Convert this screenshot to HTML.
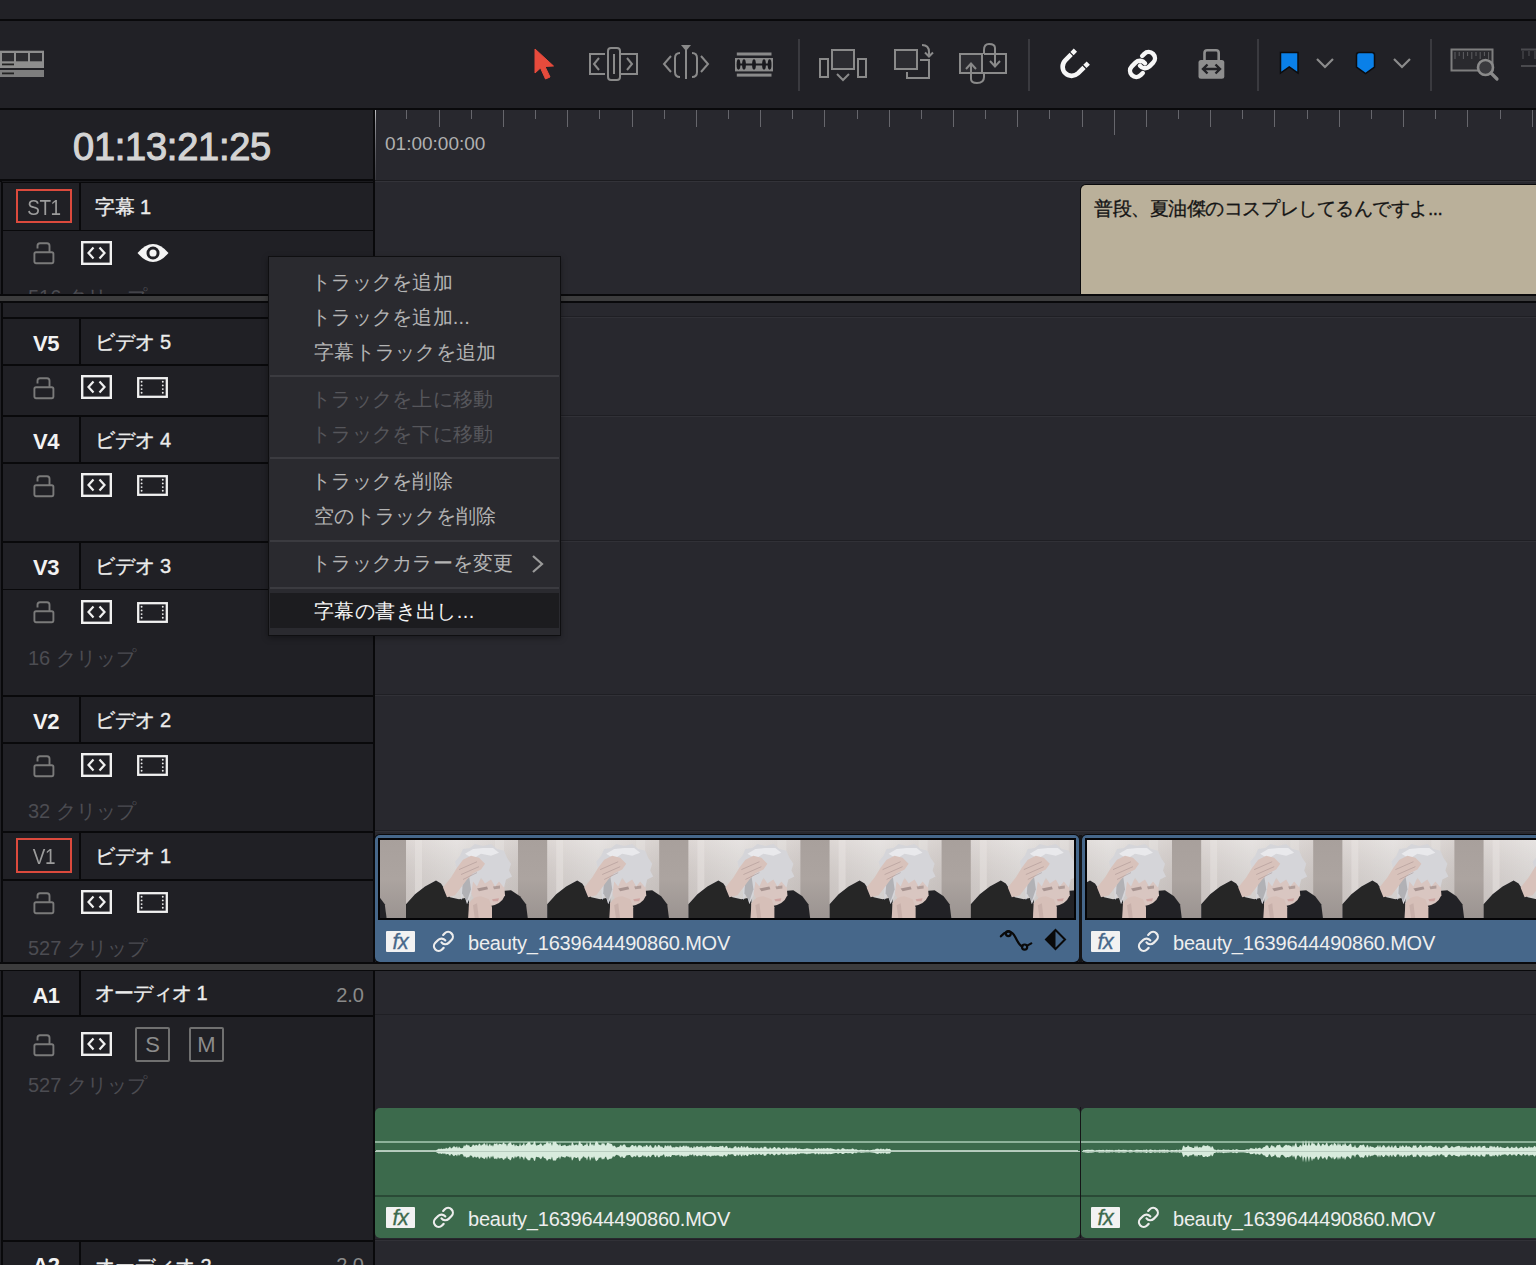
<!DOCTYPE html><html><head><meta charset="utf-8"><style>
*{margin:0;padding:0;box-sizing:border-box}
html,body{width:1536px;height:1265px;overflow:hidden;background:#202025;font-family:"Liberation Sans", sans-serif;}
.a{position:absolute}
.t{position:absolute;white-space:nowrap;line-height:1}
svg{position:absolute;overflow:visible}
</style></head><body>

<div class="a" style="left:0px;top:0px;width:1536px;height:19px;background:#212126;"></div>
<div class="a" style="left:0px;top:19px;width:1536px;height:2px;background:#09090b;"></div>
<div class="a" style="left:0px;top:21px;width:1536px;height:87px;background:#212126;"></div>
<div class="a" style="left:0px;top:108px;width:1536px;height:2px;background:#09090b;"></div>
<div class="a" style="left:0px;top:110px;width:373px;height:1155px;background:#202025;"></div>
<div class="a" style="left:373px;top:110px;width:2px;height:1155px;background:#09090b;"></div>
<div class="a" style="left:375px;top:110px;width:1161px;height:1155px;background:#28282e;"></div>
<div class="t" style="left:73px;top:128px;font-size:38px;color:#d4d4d4;letter-spacing:-0.25px;-webkit-text-stroke:1.1px #d4d4d4">01:13:21:25</div>
<div class="a" style="left:375px;top:180px;width:1161px;height:1px;background:#1c1c20;"></div>
<div class="a" style="left:375px;top:181px;width:1161px;height:1px;background:#333339;"></div>
<div class="a" style="left:406px;top:110px;width:1px;height:9px;background:#66666c;"></div>
<div class="a" style="left:439px;top:110px;width:1px;height:17px;background:#66666c;"></div>
<div class="a" style="left:471px;top:110px;width:1px;height:9px;background:#66666c;"></div>
<div class="a" style="left:503px;top:110px;width:1px;height:17px;background:#66666c;"></div>
<div class="a" style="left:535px;top:110px;width:1px;height:9px;background:#66666c;"></div>
<div class="a" style="left:567px;top:110px;width:1px;height:17px;background:#66666c;"></div>
<div class="a" style="left:599px;top:110px;width:1px;height:9px;background:#66666c;"></div>
<div class="a" style="left:632px;top:110px;width:1px;height:17px;background:#66666c;"></div>
<div class="a" style="left:664px;top:110px;width:1px;height:9px;background:#66666c;"></div>
<div class="a" style="left:696px;top:110px;width:1px;height:17px;background:#66666c;"></div>
<div class="a" style="left:728px;top:110px;width:1px;height:9px;background:#66666c;"></div>
<div class="a" style="left:760px;top:110px;width:1px;height:17px;background:#66666c;"></div>
<div class="a" style="left:792px;top:110px;width:1px;height:9px;background:#66666c;"></div>
<div class="a" style="left:824px;top:110px;width:1px;height:17px;background:#66666c;"></div>
<div class="a" style="left:857px;top:110px;width:1px;height:9px;background:#66666c;"></div>
<div class="a" style="left:889px;top:110px;width:1px;height:17px;background:#66666c;"></div>
<div class="a" style="left:921px;top:110px;width:1px;height:9px;background:#66666c;"></div>
<div class="a" style="left:953px;top:110px;width:1px;height:17px;background:#66666c;"></div>
<div class="a" style="left:985px;top:110px;width:1px;height:9px;background:#66666c;"></div>
<div class="a" style="left:1017px;top:110px;width:1px;height:17px;background:#66666c;"></div>
<div class="a" style="left:1049px;top:110px;width:1px;height:9px;background:#66666c;"></div>
<div class="a" style="left:1082px;top:110px;width:1px;height:17px;background:#66666c;"></div>
<div class="a" style="left:1114px;top:110px;width:1px;height:25px;background:#66666c;"></div>
<div class="a" style="left:1146px;top:110px;width:1px;height:17px;background:#66666c;"></div>
<div class="a" style="left:1178px;top:110px;width:1px;height:9px;background:#66666c;"></div>
<div class="a" style="left:1210px;top:110px;width:1px;height:17px;background:#66666c;"></div>
<div class="a" style="left:1242px;top:110px;width:1px;height:9px;background:#66666c;"></div>
<div class="a" style="left:1274px;top:110px;width:1px;height:17px;background:#66666c;"></div>
<div class="a" style="left:1307px;top:110px;width:1px;height:9px;background:#66666c;"></div>
<div class="a" style="left:1339px;top:110px;width:1px;height:17px;background:#66666c;"></div>
<div class="a" style="left:1371px;top:110px;width:1px;height:9px;background:#66666c;"></div>
<div class="a" style="left:1403px;top:110px;width:1px;height:17px;background:#66666c;"></div>
<div class="a" style="left:1435px;top:110px;width:1px;height:9px;background:#66666c;"></div>
<div class="a" style="left:1467px;top:110px;width:1px;height:17px;background:#66666c;"></div>
<div class="a" style="left:1500px;top:110px;width:1px;height:9px;background:#66666c;"></div>
<div class="a" style="left:1532px;top:110px;width:1px;height:17px;background:#66666c;"></div>
<div class="a" style="left:374.5px;top:110px;width:1.5px;height:70px;background:linear-gradient(#c0c0c4,#8a8a90 20%,#5a5a60 60%,#3a3a40);"></div>
<div class="t" style="left:385px;top:134px;font-size:19px;color:#b0b0b0;">01:00:00:00</div>
<div class="a" style="left:1px;top:182px;width:1.6px;height:1083px;background:#09090b;"></div>
<div class="a" style="left:0px;top:179px;width:373px;height:3px;background:#09090b;"></div>
<div class="a" style="left:2px;top:180.5px;width:371px;height:1px;background:#1a1a1e;"></div>
<div class="a" style="left:2px;top:181.5px;width:371px;height:1.5px;background:#09090b;"></div>
<div class="a" style="left:79px;top:181.5px;width:1.5px;height:48.0px;background:#09090b;"></div>
<div class="a" style="left:2px;top:229.5px;width:371px;height:1.5px;background:#09090b;"></div>
<div class="a" style="left:16px;top:188.5px;width:56px;height:34.5px;border:2px solid #dc4a3d"></div>
<div class="t" style="left:16px;top:196.5px;font-size:22.5px;color:#9c9c9c;width:56px;text-align:center;letter-spacing:-0.5px;transform:scaleX(0.84)">ST1</div>
<div class="t" style="left:94.5px;top:196.5px;font-size:20px;color:#ececec;-webkit-text-stroke:0.35px #ececec">字幕 1</div>
<svg style="left:33px;top:240.0px" width="22" height="24" viewBox="0 0 22 24"><path d="M4.5 8.5 V5.8 Q4.5 3.2 7 3.2 H14 Q16.5 3.2 16.5 5.8 V12" fill="none" stroke="#7a7a7a" stroke-width="1.9"/><rect x="1.4" y="12.2" width="19" height="11" rx="1.6" fill="none" stroke="#7a7a7a" stroke-width="1.9"/></svg>
<svg style="left:81px;top:240.5px" width="31" height="24" viewBox="0 0 31 24"><rect x="1.2" y="1.2" width="28.6" height="21.6" fill="none" stroke="#f0f0f0" stroke-width="2.4"/><path d="M12.5 6.5 L7.5 12 L12.5 17.5 M18.5 6.5 L23.5 12 L18.5 17.5" fill="none" stroke="#f0f0f0" stroke-width="2.2"/></svg>
<svg style="left:137px;top:240.5px" width="32" height="24" viewBox="0 0 32 24"><path d="M0.5 12 Q16 -6 31.5 12 Q16 30 0.5 12 Z" fill="#f4f4f4"/><circle cx="16" cy="12" r="6.5" fill="#202025"/><circle cx="16" cy="12" r="3.6" fill="#f4f4f4"/></svg>
<div class="a" style="left:0;top:231px;width:373px;height:63px;overflow:hidden">
<div class="t" style="left:28px;top:56px;font-size:20px;color:#4c4c52;">516 クリップ</div>
</div>
<div class="a" style="left:0px;top:294px;width:1536px;height:1.5px;background:#09090b;"></div>
<div class="a" style="left:0px;top:295.5px;width:1536px;height:5.5px;background:#3c3c3d;"></div>
<div class="a" style="left:0px;top:301px;width:1536px;height:1.5px;background:#09090b;"></div>
<div class="a" style="left:2px;top:317px;width:371px;height:1.5px;background:#09090b;"></div>
<div class="a" style="left:79px;top:317px;width:1.5px;height:47px;background:#09090b;"></div>
<div class="a" style="left:2px;top:364px;width:371px;height:1.5px;background:#09090b;"></div>
<div class="t" style="left:16px;top:333.0px;font-size:22px;color:#f2f2f2;width:60px;text-align:center;font-weight:bold;letter-spacing:-0.5px">V5</div>
<div class="t" style="left:94.5px;top:331.5px;font-size:20px;color:#ececec;-webkit-text-stroke:0.35px #ececec">ビデオ 5</div>
<svg style="left:33px;top:374.5px" width="22" height="24" viewBox="0 0 22 24"><path d="M4.5 8.5 V5.8 Q4.5 3.2 7 3.2 H14 Q16.5 3.2 16.5 5.8 V12" fill="none" stroke="#7a7a7a" stroke-width="1.9"/><rect x="1.4" y="12.2" width="19" height="11" rx="1.6" fill="none" stroke="#7a7a7a" stroke-width="1.9"/></svg>
<svg style="left:81px;top:375px" width="31" height="24" viewBox="0 0 31 24"><rect x="1.2" y="1.2" width="28.6" height="21.6" fill="none" stroke="#f0f0f0" stroke-width="2.4"/><path d="M12.5 6.5 L7.5 12 L12.5 17.5 M18.5 6.5 L23.5 12 L18.5 17.5" fill="none" stroke="#f0f0f0" stroke-width="2.2"/></svg>
<svg style="left:137px;top:377px" width="31" height="21" viewBox="0 0 31 21"><rect x="1.2" y="1.2" width="28.6" height="18.6" fill="none" stroke="#f0f0f0" stroke-width="2.3"/><circle cx="4.6" cy="4.7" r="0.95" fill="#e8e8e8"/><circle cx="25.8" cy="4.7" r="0.95" fill="#e8e8e8"/><circle cx="4.6" cy="8.4" r="0.95" fill="#e8e8e8"/><circle cx="25.8" cy="8.4" r="0.95" fill="#e8e8e8"/><circle cx="4.6" cy="12.1" r="0.95" fill="#e8e8e8"/><circle cx="25.8" cy="12.1" r="0.95" fill="#e8e8e8"/><circle cx="4.6" cy="15.8" r="0.95" fill="#e8e8e8"/><circle cx="25.8" cy="15.8" r="0.95" fill="#e8e8e8"/></svg>
<div class="a" style="left:2px;top:415px;width:371px;height:1.5px;background:#09090b;"></div>
<div class="a" style="left:79px;top:415px;width:1.5px;height:47px;background:#09090b;"></div>
<div class="a" style="left:2px;top:462px;width:371px;height:1.5px;background:#09090b;"></div>
<div class="t" style="left:16px;top:431.0px;font-size:22px;color:#f2f2f2;width:60px;text-align:center;font-weight:bold;letter-spacing:-0.5px">V4</div>
<div class="t" style="left:94.5px;top:429.5px;font-size:20px;color:#ececec;-webkit-text-stroke:0.35px #ececec">ビデオ 4</div>
<svg style="left:33px;top:472.5px" width="22" height="24" viewBox="0 0 22 24"><path d="M4.5 8.5 V5.8 Q4.5 3.2 7 3.2 H14 Q16.5 3.2 16.5 5.8 V12" fill="none" stroke="#7a7a7a" stroke-width="1.9"/><rect x="1.4" y="12.2" width="19" height="11" rx="1.6" fill="none" stroke="#7a7a7a" stroke-width="1.9"/></svg>
<svg style="left:81px;top:473px" width="31" height="24" viewBox="0 0 31 24"><rect x="1.2" y="1.2" width="28.6" height="21.6" fill="none" stroke="#f0f0f0" stroke-width="2.4"/><path d="M12.5 6.5 L7.5 12 L12.5 17.5 M18.5 6.5 L23.5 12 L18.5 17.5" fill="none" stroke="#f0f0f0" stroke-width="2.2"/></svg>
<svg style="left:137px;top:475px" width="31" height="21" viewBox="0 0 31 21"><rect x="1.2" y="1.2" width="28.6" height="18.6" fill="none" stroke="#f0f0f0" stroke-width="2.3"/><circle cx="4.6" cy="4.7" r="0.95" fill="#e8e8e8"/><circle cx="25.8" cy="4.7" r="0.95" fill="#e8e8e8"/><circle cx="4.6" cy="8.4" r="0.95" fill="#e8e8e8"/><circle cx="25.8" cy="8.4" r="0.95" fill="#e8e8e8"/><circle cx="4.6" cy="12.1" r="0.95" fill="#e8e8e8"/><circle cx="25.8" cy="12.1" r="0.95" fill="#e8e8e8"/><circle cx="4.6" cy="15.8" r="0.95" fill="#e8e8e8"/><circle cx="25.8" cy="15.8" r="0.95" fill="#e8e8e8"/></svg>
<div class="a" style="left:2px;top:541px;width:371px;height:1.5px;background:#09090b;"></div>
<div class="a" style="left:79px;top:541px;width:1.5px;height:47.5px;background:#09090b;"></div>
<div class="a" style="left:2px;top:588.5px;width:371px;height:1.5px;background:#09090b;"></div>
<div class="t" style="left:16px;top:557.25px;font-size:22px;color:#f2f2f2;width:60px;text-align:center;font-weight:bold;letter-spacing:-0.5px">V3</div>
<div class="t" style="left:94.5px;top:555.75px;font-size:20px;color:#ececec;-webkit-text-stroke:0.35px #ececec">ビデオ 3</div>
<svg style="left:33px;top:599.0px" width="22" height="24" viewBox="0 0 22 24"><path d="M4.5 8.5 V5.8 Q4.5 3.2 7 3.2 H14 Q16.5 3.2 16.5 5.8 V12" fill="none" stroke="#7a7a7a" stroke-width="1.9"/><rect x="1.4" y="12.2" width="19" height="11" rx="1.6" fill="none" stroke="#7a7a7a" stroke-width="1.9"/></svg>
<svg style="left:81px;top:599.5px" width="31" height="24" viewBox="0 0 31 24"><rect x="1.2" y="1.2" width="28.6" height="21.6" fill="none" stroke="#f0f0f0" stroke-width="2.4"/><path d="M12.5 6.5 L7.5 12 L12.5 17.5 M18.5 6.5 L23.5 12 L18.5 17.5" fill="none" stroke="#f0f0f0" stroke-width="2.2"/></svg>
<svg style="left:137px;top:601.5px" width="31" height="21" viewBox="0 0 31 21"><rect x="1.2" y="1.2" width="28.6" height="18.6" fill="none" stroke="#f0f0f0" stroke-width="2.3"/><circle cx="4.6" cy="4.7" r="0.95" fill="#e8e8e8"/><circle cx="25.8" cy="4.7" r="0.95" fill="#e8e8e8"/><circle cx="4.6" cy="8.4" r="0.95" fill="#e8e8e8"/><circle cx="25.8" cy="8.4" r="0.95" fill="#e8e8e8"/><circle cx="4.6" cy="12.1" r="0.95" fill="#e8e8e8"/><circle cx="25.8" cy="12.1" r="0.95" fill="#e8e8e8"/><circle cx="4.6" cy="15.8" r="0.95" fill="#e8e8e8"/><circle cx="25.8" cy="15.8" r="0.95" fill="#e8e8e8"/></svg>
<div class="t" style="left:28px;top:647.5px;font-size:20px;color:#4c4c52;">16 クリップ</div>
<div class="a" style="left:2px;top:695px;width:371px;height:1.5px;background:#09090b;"></div>
<div class="a" style="left:79px;top:695px;width:1.5px;height:47px;background:#09090b;"></div>
<div class="a" style="left:2px;top:742px;width:371px;height:1.5px;background:#09090b;"></div>
<div class="t" style="left:16px;top:711.0px;font-size:22px;color:#f2f2f2;width:60px;text-align:center;font-weight:bold;letter-spacing:-0.5px">V2</div>
<div class="t" style="left:94.5px;top:709.5px;font-size:20px;color:#ececec;-webkit-text-stroke:0.35px #ececec">ビデオ 2</div>
<svg style="left:33px;top:752.5px" width="22" height="24" viewBox="0 0 22 24"><path d="M4.5 8.5 V5.8 Q4.5 3.2 7 3.2 H14 Q16.5 3.2 16.5 5.8 V12" fill="none" stroke="#7a7a7a" stroke-width="1.9"/><rect x="1.4" y="12.2" width="19" height="11" rx="1.6" fill="none" stroke="#7a7a7a" stroke-width="1.9"/></svg>
<svg style="left:81px;top:753px" width="31" height="24" viewBox="0 0 31 24"><rect x="1.2" y="1.2" width="28.6" height="21.6" fill="none" stroke="#f0f0f0" stroke-width="2.4"/><path d="M12.5 6.5 L7.5 12 L12.5 17.5 M18.5 6.5 L23.5 12 L18.5 17.5" fill="none" stroke="#f0f0f0" stroke-width="2.2"/></svg>
<svg style="left:137px;top:755px" width="31" height="21" viewBox="0 0 31 21"><rect x="1.2" y="1.2" width="28.6" height="18.6" fill="none" stroke="#f0f0f0" stroke-width="2.3"/><circle cx="4.6" cy="4.7" r="0.95" fill="#e8e8e8"/><circle cx="25.8" cy="4.7" r="0.95" fill="#e8e8e8"/><circle cx="4.6" cy="8.4" r="0.95" fill="#e8e8e8"/><circle cx="25.8" cy="8.4" r="0.95" fill="#e8e8e8"/><circle cx="4.6" cy="12.1" r="0.95" fill="#e8e8e8"/><circle cx="25.8" cy="12.1" r="0.95" fill="#e8e8e8"/><circle cx="4.6" cy="15.8" r="0.95" fill="#e8e8e8"/><circle cx="25.8" cy="15.8" r="0.95" fill="#e8e8e8"/></svg>
<div class="t" style="left:28px;top:801px;font-size:20px;color:#4c4c52;">32 クリップ</div>
<div class="a" style="left:2px;top:831px;width:371px;height:1.5px;background:#09090b;"></div>
<div class="a" style="left:79px;top:831px;width:1.5px;height:48px;background:#09090b;"></div>
<div class="a" style="left:2px;top:879px;width:371px;height:1.5px;background:#09090b;"></div>
<div class="a" style="left:16px;top:838.0px;width:56px;height:34.5px;border:2px solid #dc4a3d"></div>
<div class="t" style="left:16px;top:846.0px;font-size:22.5px;color:#9c9c9c;width:56px;text-align:center;letter-spacing:-0.5px;transform:scaleX(0.84)">V1</div>
<div class="t" style="left:94.5px;top:846.0px;font-size:20px;color:#ececec;-webkit-text-stroke:0.35px #ececec">ビデオ 1</div>
<svg style="left:33px;top:889.5px" width="22" height="24" viewBox="0 0 22 24"><path d="M4.5 8.5 V5.8 Q4.5 3.2 7 3.2 H14 Q16.5 3.2 16.5 5.8 V12" fill="none" stroke="#7a7a7a" stroke-width="1.9"/><rect x="1.4" y="12.2" width="19" height="11" rx="1.6" fill="none" stroke="#7a7a7a" stroke-width="1.9"/></svg>
<svg style="left:81px;top:890px" width="31" height="24" viewBox="0 0 31 24"><rect x="1.2" y="1.2" width="28.6" height="21.6" fill="none" stroke="#f0f0f0" stroke-width="2.4"/><path d="M12.5 6.5 L7.5 12 L12.5 17.5 M18.5 6.5 L23.5 12 L18.5 17.5" fill="none" stroke="#f0f0f0" stroke-width="2.2"/></svg>
<svg style="left:137px;top:892px" width="31" height="21" viewBox="0 0 31 21"><rect x="1.2" y="1.2" width="28.6" height="18.6" fill="none" stroke="#f0f0f0" stroke-width="2.3"/><circle cx="4.6" cy="4.7" r="0.95" fill="#e8e8e8"/><circle cx="25.8" cy="4.7" r="0.95" fill="#e8e8e8"/><circle cx="4.6" cy="8.4" r="0.95" fill="#e8e8e8"/><circle cx="25.8" cy="8.4" r="0.95" fill="#e8e8e8"/><circle cx="4.6" cy="12.1" r="0.95" fill="#e8e8e8"/><circle cx="25.8" cy="12.1" r="0.95" fill="#e8e8e8"/><circle cx="4.6" cy="15.8" r="0.95" fill="#e8e8e8"/><circle cx="25.8" cy="15.8" r="0.95" fill="#e8e8e8"/></svg>
<div class="t" style="left:28px;top:938px;font-size:20px;color:#4c4c52;">527 クリップ</div>
<div class="a" style="left:0px;top:962px;width:1536px;height:1.5px;background:#09090b;"></div>
<div class="a" style="left:0px;top:963.5px;width:1536px;height:6px;background:#3c3c3d;"></div>
<div class="a" style="left:0px;top:969.5px;width:1536px;height:1.5px;background:#09090b;"></div>
<div class="a" style="left:2px;top:969.5px;width:371px;height:1.5px;background:#09090b;"></div>
<div class="a" style="left:79px;top:969.5px;width:1.5px;height:45.5px;background:#09090b;"></div>
<div class="a" style="left:2px;top:1015px;width:371px;height:1.5px;background:#09090b;"></div>
<div class="t" style="left:16px;top:984.75px;font-size:22px;color:#f2f2f2;width:60px;text-align:center;font-weight:bold;letter-spacing:-0.5px">A1</div>
<div class="t" style="left:94.5px;top:983.25px;font-size:20px;color:#ececec;-webkit-text-stroke:0.35px #ececec"><span style="letter-spacing:-0.6px">オーディオ 1</span></div>
<svg style="left:33px;top:1031.5px" width="22" height="24" viewBox="0 0 22 24"><path d="M4.5 8.5 V5.8 Q4.5 3.2 7 3.2 H14 Q16.5 3.2 16.5 5.8 V12" fill="none" stroke="#7a7a7a" stroke-width="1.9"/><rect x="1.4" y="12.2" width="19" height="11" rx="1.6" fill="none" stroke="#7a7a7a" stroke-width="1.9"/></svg>
<svg style="left:81px;top:1032px" width="31" height="24" viewBox="0 0 31 24"><rect x="1.2" y="1.2" width="28.6" height="21.6" fill="none" stroke="#f0f0f0" stroke-width="2.4"/><path d="M12.5 6.5 L7.5 12 L12.5 17.5 M18.5 6.5 L23.5 12 L18.5 17.5" fill="none" stroke="#f0f0f0" stroke-width="2.2"/></svg>
<div class="a" style="left:135px;top:1027px;width:35px;height:35px;border:2px solid #707070;border-radius:2px"></div>
<div class="t" style="left:135px;top:1034px;font-size:22px;color:#8c8c8c;width:35px;text-align:center">S</div>
<div class="a" style="left:189px;top:1027px;width:35px;height:35px;border:2px solid #707070;border-radius:2px"></div>
<div class="t" style="left:189px;top:1034px;font-size:22px;color:#8c8c8c;width:35px;text-align:center">M</div>
<div class="t" style="left:28px;top:1075px;font-size:20px;color:#4c4c52;">527 クリップ</div>
<div class="t" style="left:300px;top:985px;font-size:20px;color:#8a8a8a;width:64px;text-align:right">2.0</div>
<div class="a" style="left:2px;top:1240px;width:371px;height:1.5px;background:#09090b;"></div>
<div class="a" style="left:79px;top:1240px;width:2px;height:30px;background:#09090b;"></div>
<div class="t" style="left:16px;top:1255px;font-size:22px;color:#f2f2f2;width:60px;text-align:center;font-weight:bold;letter-spacing:-0.5px">A2</div>
<div class="t" style="left:95px;top:1256px;font-size:20px;color:#ececec;-webkit-text-stroke:0.35px #ececec">オーディオ 2</div>
<div class="t" style="left:300px;top:1255px;font-size:20px;color:#8a8a8a;width:64px;text-align:right">2.0</div>
<div class="a" style="left:375px;top:316px;width:1161px;height:1px;background:#1f1f24;"></div>
<div class="a" style="left:375px;top:317px;width:1161px;height:1px;background:#313137;"></div>
<div class="a" style="left:375px;top:415px;width:1161px;height:1px;background:#1f1f24;"></div>
<div class="a" style="left:375px;top:416px;width:1161px;height:1px;background:#313137;"></div>
<div class="a" style="left:375px;top:540px;width:1161px;height:1px;background:#1f1f24;"></div>
<div class="a" style="left:375px;top:541px;width:1161px;height:1px;background:#313137;"></div>
<div class="a" style="left:375px;top:694px;width:1161px;height:1px;background:#1f1f24;"></div>
<div class="a" style="left:375px;top:695px;width:1161px;height:1px;background:#313137;"></div>
<div class="a" style="left:375px;top:830px;width:1161px;height:1px;background:#1f1f24;"></div>
<div class="a" style="left:375px;top:831px;width:1161px;height:1px;background:#313137;"></div>
<div class="a" style="left:375px;top:1239px;width:1161px;height:1px;background:#1f1f24;"></div>
<div class="a" style="left:375px;top:1240px;width:1161px;height:1px;background:#313137;"></div>
<div class="a" style="left:375px;top:1014px;width:1161px;height:1px;background:#1f1f24;"></div>
<div class="a" style="left:1079.5px;top:183.5px;width:470px;height:111px;background:#0a0a0c;border-radius:6px 0 0 0"></div>
<div class="a" style="left:1081px;top:185px;width:460px;height:109px;background:#bab09a;border-radius:5px 0 0 0"></div>
<div class="t" style="left:1094px;top:199px;font-size:19px;color:#151515;letter-spacing:-0.45px;-webkit-text-stroke:0.3px #151515">普段、夏油傑のコスプレしてるんですよ...</div>
<div class="a" style="left:374px;top:834px;width:706px;height:129px;background:#0a0a0c;border-radius:6px"></div>
<div class="a" style="left:375px;top:835px;width:704px;height:127px;background:#46678a;border-radius:5px 5px 5px 5px;overflow:hidden">
<div class="a" style="left:3px;top:2.8px;width:698px;height:82px;background:#050507;border:2px solid #050507;overflow:hidden"><svg style="left:0;top:0;overflow:hidden" width="694.0" height="78" viewBox="0 0 694.0 79" preserveAspectRatio="none"><defs>
<linearGradient id="cur" x1="0" x2="1" y1="0" y2="0"><stop offset="0" stop-color="#d8d1ce"/><stop offset="0.45" stop-color="#e3dfdd"/><stop offset="1" stop-color="#d2cbc8"/></linearGradient>
<linearGradient id="curv" x1="0" x2="0" y1="0" y2="1"><stop offset="0" stop-color="#fff" stop-opacity="0.15"/><stop offset="1" stop-color="#000" stop-opacity="0.08"/></linearGradient>
<linearGradient id="gry" x1="0" x2="0" y1="0" y2="1"><stop offset="0" stop-color="#a8a09c"/><stop offset="0.5" stop-color="#aca4a0"/><stop offset="1" stop-color="#9a9390"/></linearGradient>
<filter id="bl" x="-10%" y="-10%" width="120%" height="120%"><feGaussianBlur stdDeviation="0.7"/></filter>
<symbol id="fr" viewBox="0 0 141 79" width="141" height="79" overflow="visible">
<g filter="url(#bl)">
<rect x="-1" y="-2" width="113" height="83" fill="url(#cur)"/>
<rect x="-1" y="-2" width="113" height="83" fill="url(#curv)"/>
<rect x="111" y="-2" width="31" height="83" fill="url(#gry)"/>
<rect x="8" y="-2" width="7" height="83" fill="#ebe7e5" opacity="0.45"/>
<rect x="88" y="-2" width="9" height="83" fill="#e9e5e3" opacity="0.4"/>
<path d="M-1 81 L-1 65 L8 55 L18 47 L29 41 L34 44 L43 58 L52 60 L62 58 L62 81 Z" fill="#252528"/>
<path d="M84 81 L84 58 L92 52 L104 51 L113 57 L119 65 L121 81 Z" fill="#242427"/>
<path d="M62 42 Q78 37 97 43 L98 56 Q94 66 82 67 L68 62 L62 50 Z" fill="#d9c6c1"/>
<path d="M70 49 L80 47 L81 50 L72 52 Z" fill="#7e6a68" opacity="0.55"/>
<path d="M86 47 L93 46 L93 49 L87 50 Z" fill="#7e6a68" opacity="0.45"/>
<path d="M85 60 L92 59 L91 62 L86 62 Z" fill="#c48e8c" opacity="0.6"/>
<path d="M50 30 L48 22 L53 16 L56 9 L63 8 L68 4 L76 6 L84 4 L90 9 L97 11 L100 18 L104 24 L102 31 L105 37 L99 40 L97 48 L92 42 L88 47 L84 40 L78 44 L74 38 L70 47 L66 42 L64 56 L60 65 L57 55 L54 61 L53 48 Z" fill="#d5d5d9"/>
<path d="M58 14 L66 9 L76 8 L86 8 L92 13 L84 16 L74 14 L66 19 Z" fill="#eeeef0" opacity="0.8"/>
<path d="M56 40 L62 36 L64 50 L60 62 L55 54 Z" fill="#a8a7ab" opacity="0.8"/>
<path d="M36 48 L44 38 L50 28 L56 20 L64 16 L72 18 L78 24 L74 30 L66 34 L60 40 L54 48 L48 56 L40 58 Z" fill="#d8c2bb"/>
<path d="M52 30 L70 22 M54 35 L72 27 M56 40 L70 33" stroke="#a89290" stroke-width="0.9" opacity="0.6"/>
<path d="M61 81 L62 64 Q66 57 74 57 L82 60 L85 68 L85 81 Z" fill="#d6bfb8"/>
<path d="M66 66 L70 64 L72 81 L68 81 Z" fill="#b9a29c" opacity="0.5"/>
</g>
</symbol></defs><use href="#fr" x="-114.2" y="0"/><use href="#fr" x="27.0" y="0"/><use href="#fr" x="168.2" y="0"/><use href="#fr" x="309.4" y="0"/><use href="#fr" x="450.6" y="0"/><use href="#fr" x="591.8" y="0"/></svg></div>
</div>
<div class="a" style="left:1081px;top:834px;width:480px;height:129px;background:#0a0a0c;border-radius:6px"></div>
<div class="a" style="left:1082px;top:835px;width:478px;height:127px;background:#46678a;border-radius:5px 5px 5px 5px;overflow:hidden">
<div class="a" style="left:3px;top:2.8px;width:472px;height:82px;background:#050507;border:2px solid #050507;overflow:hidden"><svg style="left:0;top:0;overflow:hidden" width="468.0" height="78" viewBox="0 0 468.0 79" preserveAspectRatio="none"><defs>
<linearGradient id="cur" x1="0" x2="1" y1="0" y2="0"><stop offset="0" stop-color="#d8d1ce"/><stop offset="0.45" stop-color="#e3dfdd"/><stop offset="1" stop-color="#d2cbc8"/></linearGradient>
<linearGradient id="curv" x1="0" x2="0" y1="0" y2="1"><stop offset="0" stop-color="#fff" stop-opacity="0.15"/><stop offset="1" stop-color="#000" stop-opacity="0.08"/></linearGradient>
<linearGradient id="gry" x1="0" x2="0" y1="0" y2="1"><stop offset="0" stop-color="#a8a09c"/><stop offset="0.5" stop-color="#aca4a0"/><stop offset="1" stop-color="#9a9390"/></linearGradient>
<filter id="bl" x="-10%" y="-10%" width="120%" height="120%"><feGaussianBlur stdDeviation="0.7"/></filter>
<symbol id="fr" viewBox="0 0 141 79" width="141" height="79" overflow="visible">
<g filter="url(#bl)">
<rect x="-1" y="-2" width="113" height="83" fill="url(#cur)"/>
<rect x="-1" y="-2" width="113" height="83" fill="url(#curv)"/>
<rect x="111" y="-2" width="31" height="83" fill="url(#gry)"/>
<rect x="8" y="-2" width="7" height="83" fill="#ebe7e5" opacity="0.45"/>
<rect x="88" y="-2" width="9" height="83" fill="#e9e5e3" opacity="0.4"/>
<path d="M-1 81 L-1 65 L8 55 L18 47 L29 41 L34 44 L43 58 L52 60 L62 58 L62 81 Z" fill="#252528"/>
<path d="M84 81 L84 58 L92 52 L104 51 L113 57 L119 65 L121 81 Z" fill="#242427"/>
<path d="M62 42 Q78 37 97 43 L98 56 Q94 66 82 67 L68 62 L62 50 Z" fill="#d9c6c1"/>
<path d="M70 49 L80 47 L81 50 L72 52 Z" fill="#7e6a68" opacity="0.55"/>
<path d="M86 47 L93 46 L93 49 L87 50 Z" fill="#7e6a68" opacity="0.45"/>
<path d="M85 60 L92 59 L91 62 L86 62 Z" fill="#c48e8c" opacity="0.6"/>
<path d="M50 30 L48 22 L53 16 L56 9 L63 8 L68 4 L76 6 L84 4 L90 9 L97 11 L100 18 L104 24 L102 31 L105 37 L99 40 L97 48 L92 42 L88 47 L84 40 L78 44 L74 38 L70 47 L66 42 L64 56 L60 65 L57 55 L54 61 L53 48 Z" fill="#d5d5d9"/>
<path d="M58 14 L66 9 L76 8 L86 8 L92 13 L84 16 L74 14 L66 19 Z" fill="#eeeef0" opacity="0.8"/>
<path d="M56 40 L62 36 L64 50 L60 62 L55 54 Z" fill="#a8a7ab" opacity="0.8"/>
<path d="M36 48 L44 38 L50 28 L56 20 L64 16 L72 18 L78 24 L74 30 L66 34 L60 40 L54 48 L48 56 L40 58 Z" fill="#d8c2bb"/>
<path d="M52 30 L70 22 M54 35 L72 27 M56 40 L70 33" stroke="#a89290" stroke-width="0.9" opacity="0.6"/>
<path d="M61 81 L62 64 Q66 57 74 57 L82 60 L85 68 L85 81 Z" fill="#d6bfb8"/>
<path d="M66 66 L70 64 L72 81 L68 81 Z" fill="#b9a29c" opacity="0.5"/>
</g>
</symbol></defs><use href="#fr" x="-26.0" y="0"/><use href="#fr" x="115.2" y="0"/><use href="#fr" x="256.4" y="0"/><use href="#fr" x="397.6" y="0"/></svg></div>
</div>
<div class="a" style="left:1079px;top:835px;width:3px;height:127px;background:#141416;"></div>
<div class="a" style="left:386px;top:931px;width:29px;height:21px;background:#f2f2f2;border-radius:1px"></div>
<div class="t" style="left:387px;top:931.5px;font-size:21.5px;color:#46678a;width:27px;text-align:center;letter-spacing:-0.3px;-webkit-text-stroke:0.3px #46678a"><i>fx</i></div>
<svg style="left:432px;top:930px" width="23" height="23" viewBox="0 0 23 23"><g fill="none" stroke="#ededed" stroke-width="2.3" stroke-linecap="round" transform="scale(0.95)"><path d="M10 13a5 5 0 0 0 7.54.54l3-3a5 5 0 0 0-7.07-7.07l-1.72 1.71"/><path d="M14 11a5 5 0 0 0-7.54-.54l-3 3a5 5 0 0 0 7.07 7.07l1.71-1.71"/></g></svg>
<div class="t" style="left:468px;top:933px;font-size:20px;color:#eeeeee;letter-spacing:-0.2px">beauty_1639644490860.MOV</div>
<div class="a" style="left:1091px;top:931px;width:29px;height:21px;background:#f2f2f2;border-radius:1px"></div>
<div class="t" style="left:1092px;top:931.5px;font-size:21.5px;color:#46678a;width:27px;text-align:center;letter-spacing:-0.3px;-webkit-text-stroke:0.3px #46678a"><i>fx</i></div>
<svg style="left:1137px;top:930px" width="23" height="23" viewBox="0 0 23 23"><g fill="none" stroke="#ededed" stroke-width="2.3" stroke-linecap="round" transform="scale(0.95)"><path d="M10 13a5 5 0 0 0 7.54.54l3-3a5 5 0 0 0-7.07-7.07l-1.72 1.71"/><path d="M14 11a5 5 0 0 0-7.54-.54l-3 3a5 5 0 0 0 7.07 7.07l1.71-1.71"/></g></svg>
<div class="t" style="left:1173px;top:933px;font-size:20px;color:#eeeeee;letter-spacing:-0.2px">beauty_1639644490860.MOV</div>
<svg style="left:1000px;top:928px" width="34" height="24" viewBox="0 0 34 24"><g fill="none" stroke="#0a0a0a" stroke-width="2.2" stroke-linecap="round"><path d="M0.9 8.3 Q4 4.5 8 3.6 Q12.5 3 15.5 9.5 Q19 17 22.3 18.6"/><circle cx="8.3" cy="5.6" r="2.5"/><circle cx="24.6" cy="19.1" r="2.6"/><path d="M27.2 17.6 L31.3 15.4"/></g></svg>
<svg style="left:1045px;top:929px" width="21" height="21" viewBox="0 0 21 21"><path d="M10.5 1 L20 10.5 L10.5 20 L1 10.5 Z" fill="#46678a" stroke="#0a0a0a" stroke-width="2"/><path d="M10.5 1 L1 10.5 L10.5 20 Z" fill="#0a0a0a"/></svg>
<div class="a" style="left:375px;top:1107.5px;width:705px;height:130.5px;background:#3c6a4c;border-radius:5px;overflow:hidden"></div>
<div class="a" style="left:1081px;top:1107.5px;width:479px;height:130.5px;background:#3c6a4c;border-radius:5px;overflow:hidden"></div>
<div class="a" style="left:375px;top:1141px;width:705px;height:1.5px;background:#8db29a;"></div>
<div class="a" style="left:1081px;top:1141px;width:455px;height:1.5px;background:#8db29a;"></div>
<div class="a" style="left:375px;top:1195px;width:705px;height:1.5px;background:#2a4a36;"></div>
<div class="a" style="left:1081px;top:1195px;width:455px;height:1.5px;background:#2a4a36;"></div>
<div class="a" style="left:1079.5px;top:1107px;width:1.5px;height:131px;background:#151517;"></div>
<div class="a" style="left:386px;top:1207px;width:29px;height:21px;background:#f2f2f2;border-radius:1px"></div>
<div class="t" style="left:387px;top:1207.5px;font-size:21.5px;color:#3d6a4d;width:27px;text-align:center;letter-spacing:-0.3px;-webkit-text-stroke:0.3px #3d6a4d"><i>fx</i></div>
<svg style="left:432px;top:1206px" width="23" height="23" viewBox="0 0 23 23"><g fill="none" stroke="#ededed" stroke-width="2.3" stroke-linecap="round" transform="scale(0.95)"><path d="M10 13a5 5 0 0 0 7.54.54l3-3a5 5 0 0 0-7.07-7.07l-1.72 1.71"/><path d="M14 11a5 5 0 0 0-7.54-.54l-3 3a5 5 0 0 0 7.07 7.07l1.71-1.71"/></g></svg>
<div class="t" style="left:468px;top:1209px;font-size:20px;color:#eeeeee;letter-spacing:-0.2px">beauty_1639644490860.MOV</div>
<div class="a" style="left:1091px;top:1207px;width:29px;height:21px;background:#f2f2f2;border-radius:1px"></div>
<div class="t" style="left:1092px;top:1207.5px;font-size:21.5px;color:#3d6a4d;width:27px;text-align:center;letter-spacing:-0.3px;-webkit-text-stroke:0.3px #3d6a4d"><i>fx</i></div>
<svg style="left:1137px;top:1206px" width="23" height="23" viewBox="0 0 23 23"><g fill="none" stroke="#ededed" stroke-width="2.3" stroke-linecap="round" transform="scale(0.95)"><path d="M10 13a5 5 0 0 0 7.54.54l3-3a5 5 0 0 0-7.07-7.07l-1.72 1.71"/><path d="M14 11a5 5 0 0 0-7.54-.54l-3 3a5 5 0 0 0 7.07 7.07l1.71-1.71"/></g></svg>
<div class="t" style="left:1173px;top:1209px;font-size:20px;color:#eeeeee;letter-spacing:-0.2px">beauty_1639644490860.MOV</div>
<svg style="left:0;top:0" width="1536" height="1265"><path d="M376.0 1150.3 L377.0 1150.3 L378.0 1150.3 L379.0 1150.3 L380.0 1150.3 L381.0 1150.3 L382.0 1150.3 L383.0 1150.3 L384.0 1150.3 L385.0 1150.3 L386.0 1150.3 L387.0 1150.3 L388.0 1150.3 L389.0 1150.3 L390.0 1150.3 L391.0 1150.3 L392.0 1150.3 L393.0 1150.3 L394.0 1150.3 L395.0 1150.3 L396.0 1150.3 L397.0 1150.3 L398.0 1150.3 L399.0 1150.3 L400.0 1150.3 L401.0 1150.3 L402.0 1150.3 L403.0 1150.3 L404.0 1150.3 L405.0 1150.3 L406.0 1150.3 L407.0 1150.3 L408.0 1150.3 L409.0 1150.3 L410.0 1150.3 L411.0 1150.3 L412.0 1150.3 L413.0 1150.3 L414.0 1150.3 L415.0 1150.3 L416.0 1150.3 L417.0 1150.3 L418.0 1150.3 L419.0 1150.3 L420.0 1150.3 L421.0 1150.3 L422.0 1150.3 L423.0 1150.3 L424.0 1150.3 L425.0 1150.3 L426.0 1150.3 L427.0 1150.3 L428.0 1150.3 L429.0 1150.3 L430.0 1150.3 L431.0 1150.3 L432.0 1150.3 L433.0 1150.3 L434.0 1150.3 L435.0 1150.3 L436.0 1150.3 L437.0 1149.7 L438.0 1149.3 L439.0 1148.4 L440.0 1149.3 L441.0 1148.4 L442.0 1148.7 L443.0 1149.2 L444.0 1148.3 L445.0 1149.2 L446.0 1147.6 L447.0 1148.5 L448.0 1148.5 L449.0 1147.6 L450.0 1146.5 L451.0 1148.4 L452.0 1148.1 L453.0 1147.0 L454.0 1146.1 L455.0 1147.1 L456.0 1147.6 L457.0 1146.0 L458.0 1148.5 L459.0 1146.3 L460.0 1147.8 L461.0 1148.2 L462.0 1148.3 L463.0 1147.7 L464.0 1145.1 L465.0 1146.5 L466.0 1144.8 L467.0 1144.6 L468.0 1145.7 L469.0 1144.9 L470.0 1147.0 L471.0 1147.0 L472.0 1146.3 L473.0 1144.3 L474.0 1145.3 L475.0 1145.8 L476.0 1144.6 L477.0 1145.2 L478.0 1145.8 L479.0 1143.6 L480.0 1144.0 L481.0 1146.0 L482.0 1144.5 L483.0 1144.7 L484.0 1143.1 L485.0 1143.8 L486.0 1145.7 L487.0 1142.6 L488.0 1146.5 L489.0 1145.1 L490.0 1143.5 L491.0 1146.3 L492.0 1144.7 L493.0 1146.8 L494.0 1143.8 L495.0 1143.4 L496.0 1144.2 L497.0 1142.8 L498.0 1145.4 L499.0 1143.6 L500.0 1144.1 L501.0 1144.1 L502.0 1144.7 L503.0 1142.8 L504.0 1142.3 L505.0 1144.5 L506.0 1143.6 L507.0 1146.5 L508.0 1143.4 L509.0 1143.6 L510.0 1141.9 L511.0 1142.7 L512.0 1145.3 L513.0 1144.8 L514.0 1143.4 L515.0 1146.5 L516.0 1144.4 L517.0 1145.8 L518.0 1146.0 L519.0 1146.3 L520.0 1142.8 L521.0 1145.9 L522.0 1145.3 L523.0 1144.6 L524.0 1142.2 L525.0 1146.1 L526.0 1144.2 L527.0 1143.7 L528.0 1142.0 L529.0 1142.3 L530.0 1142.0 L531.0 1145.0 L532.0 1144.3 L533.0 1144.6 L534.0 1141.8 L535.0 1141.4 L536.0 1145.6 L537.0 1145.4 L538.0 1145.1 L539.0 1145.1 L540.0 1143.8 L541.0 1143.2 L542.0 1144.9 L543.0 1146.3 L544.0 1144.1 L545.0 1144.4 L546.0 1143.4 L547.0 1141.3 L548.0 1142.7 L549.0 1143.6 L550.0 1143.1 L551.0 1142.8 L552.0 1146.0 L553.0 1141.6 L554.0 1142.2 L555.0 1141.7 L556.0 1142.1 L557.0 1144.3 L558.0 1144.2 L559.0 1145.8 L560.0 1143.0 L561.0 1146.0 L562.0 1146.0 L563.0 1145.2 L564.0 1145.5 L565.0 1144.5 L566.0 1146.0 L567.0 1146.3 L568.0 1145.5 L569.0 1145.8 L570.0 1144.4 L571.0 1146.2 L572.0 1141.7 L573.0 1143.1 L574.0 1145.5 L575.0 1145.0 L576.0 1144.5 L577.0 1144.4 L578.0 1145.7 L579.0 1141.9 L580.0 1141.1 L581.0 1143.9 L582.0 1143.8 L583.0 1145.9 L584.0 1145.8 L585.0 1144.5 L586.0 1144.9 L587.0 1142.0 L588.0 1145.5 L589.0 1146.2 L590.0 1141.3 L591.0 1143.6 L592.0 1145.6 L593.0 1143.5 L594.0 1146.2 L595.0 1143.6 L596.0 1141.2 L597.0 1141.8 L598.0 1142.7 L599.0 1145.0 L600.0 1144.4 L601.0 1145.5 L602.0 1142.6 L603.0 1143.9 L604.0 1142.8 L605.0 1145.1 L606.0 1145.8 L607.0 1143.1 L608.0 1142.5 L609.0 1143.3 L610.0 1143.6 L611.0 1143.7 L612.0 1144.2 L613.0 1146.4 L614.0 1145.4 L615.0 1146.1 L616.0 1147.5 L617.0 1147.6 L618.0 1146.8 L619.0 1146.9 L620.0 1145.5 L621.0 1144.6 L622.0 1146.4 L623.0 1144.7 L624.0 1144.5 L625.0 1144.6 L626.0 1146.7 L627.0 1147.2 L628.0 1147.2 L629.0 1147.3 L630.0 1147.3 L631.0 1145.8 L632.0 1144.9 L633.0 1145.1 L634.0 1146.4 L635.0 1145.8 L636.0 1145.3 L637.0 1147.7 L638.0 1145.8 L639.0 1144.9 L640.0 1145.4 L641.0 1145.5 L642.0 1146.4 L643.0 1147.4 L644.0 1145.4 L645.0 1146.9 L646.0 1145.3 L647.0 1144.8 L648.0 1146.7 L649.0 1146.7 L650.0 1144.9 L651.0 1145.6 L652.0 1147.5 L653.0 1147.7 L654.0 1147.6 L655.0 1145.1 L656.0 1145.4 L657.0 1147.6 L658.0 1145.3 L659.0 1144.8 L660.0 1145.9 L661.0 1147.0 L662.0 1146.3 L663.0 1147.7 L664.0 1148.1 L665.0 1144.9 L666.0 1146.0 L667.0 1146.4 L668.0 1145.1 L669.0 1146.7 L670.0 1145.3 L671.0 1145.4 L672.0 1147.5 L673.0 1147.3 L674.0 1147.2 L675.0 1147.4 L676.0 1146.3 L677.0 1147.3 L678.0 1146.8 L679.0 1147.8 L680.0 1145.2 L681.0 1147.1 L682.0 1146.7 L683.0 1146.3 L684.0 1145.3 L685.0 1146.9 L686.0 1145.3 L687.0 1146.6 L688.0 1146.5 L689.0 1146.6 L690.0 1148.2 L691.0 1146.8 L692.0 1147.7 L693.0 1148.2 L694.0 1145.7 L695.0 1147.7 L696.0 1146.8 L697.0 1146.0 L698.0 1146.5 L699.0 1147.2 L700.0 1146.6 L701.0 1146.5 L702.0 1145.8 L703.0 1148.0 L704.0 1146.6 L705.0 1147.6 L706.0 1147.5 L707.0 1146.0 L708.0 1146.8 L709.0 1146.6 L710.0 1146.0 L711.0 1145.6 L712.0 1147.0 L713.0 1146.5 L714.0 1146.9 L715.0 1146.9 L716.0 1146.4 L717.0 1147.1 L718.0 1146.9 L719.0 1147.0 L720.0 1145.7 L721.0 1146.4 L722.0 1145.9 L723.0 1145.7 L724.0 1147.7 L725.0 1146.9 L726.0 1145.8 L727.0 1146.1 L728.0 1148.1 L729.0 1148.2 L730.0 1147.3 L731.0 1148.4 L732.0 1147.9 L733.0 1148.4 L734.0 1146.7 L735.0 1146.4 L736.0 1146.1 L737.0 1148.2 L738.0 1146.7 L739.0 1146.8 L740.0 1148.3 L741.0 1146.3 L742.0 1146.0 L743.0 1148.1 L744.0 1146.1 L745.0 1147.6 L746.0 1147.4 L747.0 1146.1 L748.0 1146.5 L749.0 1148.3 L750.0 1147.6 L751.0 1147.4 L752.0 1147.9 L753.0 1148.3 L754.0 1148.0 L755.0 1147.0 L756.0 1148.8 L757.0 1147.4 L758.0 1147.7 L759.0 1148.8 L760.0 1148.0 L761.0 1147.3 L762.0 1147.6 L763.0 1148.7 L764.0 1146.5 L765.0 1147.0 L766.0 1146.6 L767.0 1148.7 L768.0 1148.3 L769.0 1148.9 L770.0 1147.1 L771.0 1148.3 L772.0 1148.7 L773.0 1148.0 L774.0 1146.9 L775.0 1147.1 L776.0 1148.4 L777.0 1148.7 L778.0 1147.0 L779.0 1147.8 L780.0 1147.5 L781.0 1148.9 L782.0 1149.0 L783.0 1147.6 L784.0 1148.2 L785.0 1149.0 L786.0 1147.1 L787.0 1147.8 L788.0 1147.4 L789.0 1149.0 L790.0 1147.3 L791.0 1149.1 L792.0 1147.4 L793.0 1148.3 L794.0 1148.5 L795.0 1148.1 L796.0 1147.3 L797.0 1148.7 L798.0 1149.0 L799.0 1148.2 L800.0 1148.8 L801.0 1149.1 L802.0 1149.0 L803.0 1149.2 L804.0 1148.9 L805.0 1148.7 L806.0 1148.7 L807.0 1147.9 L808.0 1148.8 L809.0 1148.4 L810.0 1149.0 L811.0 1148.7 L812.0 1149.4 L813.0 1148.9 L814.0 1149.4 L815.0 1148.0 L816.0 1148.4 L817.0 1149.1 L818.0 1148.6 L819.0 1147.7 L820.0 1149.3 L821.0 1148.0 L822.0 1148.7 L823.0 1148.6 L824.0 1148.0 L825.0 1148.8 L826.0 1148.6 L827.0 1148.3 L828.0 1147.8 L829.0 1149.0 L830.0 1148.1 L831.0 1148.4 L832.0 1148.5 L833.0 1148.9 L834.0 1149.0 L835.0 1149.5 L836.0 1149.4 L837.0 1149.5 L838.0 1148.4 L839.0 1149.2 L840.0 1149.4 L841.0 1149.5 L842.0 1148.3 L843.0 1148.3 L844.0 1148.6 L845.0 1149.3 L846.0 1149.3 L847.0 1149.3 L848.0 1149.0 L849.0 1149.5 L850.0 1149.1 L851.0 1149.4 L852.0 1148.5 L853.0 1148.6 L854.0 1149.3 L855.0 1149.8 L856.0 1149.0 L857.0 1149.8 L858.0 1149.9 L859.0 1150.2 L860.0 1149.8 L861.0 1149.7 L862.0 1149.7 L863.0 1150.0 L864.0 1149.7 L865.0 1150.2 L866.0 1149.9 L867.0 1150.1 L868.0 1149.8 L869.0 1150.2 L870.0 1150.2 L871.0 1149.9 L872.0 1150.0 L873.0 1149.6 L874.0 1149.7 L875.0 1149.4 L876.0 1148.8 L877.0 1148.7 L878.0 1148.5 L879.0 1149.2 L880.0 1149.3 L881.0 1148.3 L882.0 1149.6 L883.0 1148.8 L884.0 1148.9 L885.0 1149.8 L886.0 1148.7 L887.0 1148.6 L888.0 1149.0 L889.0 1148.9 L890.0 1148.8 L891.0 1150.3 L892.0 1150.3 L893.0 1150.3 L894.0 1150.3 L895.0 1150.3 L896.0 1150.3 L897.0 1150.3 L898.0 1150.3 L899.0 1150.3 L900.0 1150.3 L901.0 1150.3 L902.0 1150.3 L903.0 1150.3 L904.0 1150.3 L905.0 1150.3 L906.0 1150.3 L907.0 1150.3 L908.0 1150.3 L909.0 1150.3 L910.0 1150.3 L911.0 1150.3 L912.0 1150.3 L913.0 1150.3 L914.0 1150.3 L915.0 1150.3 L916.0 1150.3 L917.0 1150.3 L918.0 1150.3 L919.0 1150.3 L920.0 1150.3 L921.0 1150.3 L922.0 1150.3 L923.0 1150.3 L924.0 1150.3 L925.0 1150.3 L926.0 1150.3 L927.0 1150.3 L928.0 1150.3 L929.0 1150.3 L930.0 1150.3 L931.0 1150.3 L932.0 1150.3 L933.0 1150.3 L934.0 1150.3 L935.0 1150.3 L936.0 1150.3 L937.0 1150.3 L938.0 1150.3 L939.0 1150.3 L940.0 1150.3 L941.0 1150.3 L942.0 1150.3 L943.0 1150.3 L944.0 1150.3 L945.0 1150.3 L946.0 1150.3 L947.0 1150.3 L948.0 1150.3 L949.0 1150.3 L950.0 1150.3 L951.0 1150.3 L952.0 1150.3 L953.0 1150.3 L954.0 1150.3 L955.0 1150.3 L956.0 1150.3 L957.0 1150.3 L958.0 1150.3 L959.0 1150.3 L960.0 1150.3 L961.0 1150.3 L962.0 1150.3 L963.0 1150.3 L964.0 1150.3 L965.0 1150.3 L966.0 1150.3 L967.0 1150.3 L968.0 1150.3 L969.0 1150.3 L970.0 1150.3 L971.0 1150.3 L972.0 1150.3 L973.0 1150.3 L974.0 1150.3 L975.0 1150.3 L976.0 1150.3 L977.0 1150.3 L978.0 1150.3 L979.0 1150.3 L980.0 1150.3 L981.0 1150.3 L982.0 1150.3 L983.0 1150.3 L984.0 1150.3 L985.0 1150.3 L986.0 1150.3 L987.0 1150.3 L988.0 1150.3 L989.0 1150.3 L990.0 1150.3 L991.0 1150.3 L992.0 1150.3 L993.0 1150.3 L994.0 1150.3 L995.0 1150.3 L996.0 1150.3 L997.0 1150.3 L998.0 1150.3 L999.0 1150.3 L1000.0 1150.3 L1001.0 1150.3 L1002.0 1150.3 L1003.0 1150.3 L1004.0 1150.3 L1005.0 1150.3 L1006.0 1150.3 L1007.0 1150.3 L1008.0 1150.3 L1009.0 1150.3 L1010.0 1150.3 L1011.0 1150.3 L1012.0 1150.3 L1013.0 1150.3 L1014.0 1150.3 L1015.0 1150.3 L1016.0 1150.3 L1017.0 1150.3 L1018.0 1150.3 L1019.0 1150.3 L1020.0 1150.3 L1021.0 1150.3 L1022.0 1150.3 L1023.0 1150.3 L1024.0 1150.3 L1025.0 1150.3 L1026.0 1150.3 L1027.0 1150.3 L1028.0 1150.3 L1029.0 1150.3 L1030.0 1150.3 L1031.0 1150.3 L1032.0 1150.3 L1033.0 1150.3 L1034.0 1150.3 L1035.0 1150.3 L1036.0 1150.3 L1037.0 1150.3 L1038.0 1150.3 L1039.0 1150.3 L1040.0 1150.3 L1041.0 1150.3 L1042.0 1150.3 L1043.0 1150.3 L1044.0 1150.3 L1045.0 1150.3 L1046.0 1150.3 L1047.0 1150.3 L1048.0 1150.3 L1049.0 1150.3 L1050.0 1150.3 L1051.0 1150.3 L1052.0 1150.3 L1053.0 1150.3 L1054.0 1150.3 L1055.0 1150.3 L1056.0 1150.3 L1057.0 1150.3 L1058.0 1150.3 L1059.0 1150.3 L1060.0 1150.3 L1061.0 1150.3 L1062.0 1150.3 L1063.0 1150.3 L1064.0 1150.3 L1065.0 1150.3 L1066.0 1150.3 L1067.0 1150.3 L1068.0 1150.3 L1069.0 1150.3 L1070.0 1150.3 L1071.0 1150.3 L1072.0 1150.3 L1073.0 1150.3 L1074.0 1150.3 L1075.0 1150.3 L1076.0 1150.3 L1077.0 1150.3 L1078.0 1150.3 L1078.0 1152.1 L1077.0 1152.1 L1076.0 1152.1 L1075.0 1152.1 L1074.0 1152.1 L1073.0 1152.1 L1072.0 1152.1 L1071.0 1152.1 L1070.0 1152.1 L1069.0 1152.1 L1068.0 1152.1 L1067.0 1152.1 L1066.0 1152.1 L1065.0 1152.1 L1064.0 1152.1 L1063.0 1152.1 L1062.0 1152.1 L1061.0 1152.1 L1060.0 1152.1 L1059.0 1152.1 L1058.0 1152.1 L1057.0 1152.1 L1056.0 1152.1 L1055.0 1152.1 L1054.0 1152.1 L1053.0 1152.1 L1052.0 1152.1 L1051.0 1152.1 L1050.0 1152.1 L1049.0 1152.1 L1048.0 1152.1 L1047.0 1152.1 L1046.0 1152.1 L1045.0 1152.1 L1044.0 1152.1 L1043.0 1152.1 L1042.0 1152.1 L1041.0 1152.1 L1040.0 1152.1 L1039.0 1152.1 L1038.0 1152.1 L1037.0 1152.1 L1036.0 1152.1 L1035.0 1152.1 L1034.0 1152.1 L1033.0 1152.1 L1032.0 1152.1 L1031.0 1152.1 L1030.0 1152.1 L1029.0 1152.1 L1028.0 1152.1 L1027.0 1152.1 L1026.0 1152.1 L1025.0 1152.1 L1024.0 1152.1 L1023.0 1152.1 L1022.0 1152.1 L1021.0 1152.1 L1020.0 1152.1 L1019.0 1152.1 L1018.0 1152.1 L1017.0 1152.1 L1016.0 1152.1 L1015.0 1152.1 L1014.0 1152.1 L1013.0 1152.1 L1012.0 1152.1 L1011.0 1152.1 L1010.0 1152.1 L1009.0 1152.1 L1008.0 1152.1 L1007.0 1152.1 L1006.0 1152.1 L1005.0 1152.1 L1004.0 1152.1 L1003.0 1152.1 L1002.0 1152.1 L1001.0 1152.1 L1000.0 1152.1 L999.0 1152.1 L998.0 1152.1 L997.0 1152.1 L996.0 1152.1 L995.0 1152.1 L994.0 1152.1 L993.0 1152.1 L992.0 1152.1 L991.0 1152.1 L990.0 1152.1 L989.0 1152.1 L988.0 1152.1 L987.0 1152.1 L986.0 1152.1 L985.0 1152.1 L984.0 1152.1 L983.0 1152.1 L982.0 1152.1 L981.0 1152.1 L980.0 1152.1 L979.0 1152.1 L978.0 1152.1 L977.0 1152.1 L976.0 1152.1 L975.0 1152.1 L974.0 1152.1 L973.0 1152.1 L972.0 1152.1 L971.0 1152.1 L970.0 1152.1 L969.0 1152.1 L968.0 1152.1 L967.0 1152.1 L966.0 1152.1 L965.0 1152.1 L964.0 1152.1 L963.0 1152.1 L962.0 1152.1 L961.0 1152.1 L960.0 1152.1 L959.0 1152.1 L958.0 1152.1 L957.0 1152.1 L956.0 1152.1 L955.0 1152.1 L954.0 1152.1 L953.0 1152.1 L952.0 1152.1 L951.0 1152.1 L950.0 1152.1 L949.0 1152.1 L948.0 1152.1 L947.0 1152.1 L946.0 1152.1 L945.0 1152.1 L944.0 1152.1 L943.0 1152.1 L942.0 1152.1 L941.0 1152.1 L940.0 1152.1 L939.0 1152.1 L938.0 1152.1 L937.0 1152.1 L936.0 1152.1 L935.0 1152.1 L934.0 1152.1 L933.0 1152.1 L932.0 1152.1 L931.0 1152.1 L930.0 1152.1 L929.0 1152.1 L928.0 1152.1 L927.0 1152.1 L926.0 1152.1 L925.0 1152.1 L924.0 1152.1 L923.0 1152.1 L922.0 1152.1 L921.0 1152.1 L920.0 1152.1 L919.0 1152.1 L918.0 1152.1 L917.0 1152.1 L916.0 1152.1 L915.0 1152.1 L914.0 1152.1 L913.0 1152.1 L912.0 1152.1 L911.0 1152.1 L910.0 1152.1 L909.0 1152.1 L908.0 1152.1 L907.0 1152.1 L906.0 1152.1 L905.0 1152.1 L904.0 1152.1 L903.0 1152.1 L902.0 1152.1 L901.0 1152.1 L900.0 1152.1 L899.0 1152.1 L898.0 1152.1 L897.0 1152.1 L896.0 1152.1 L895.0 1152.1 L894.0 1152.1 L893.0 1152.1 L892.0 1152.1 L891.0 1152.1 L890.0 1153.6 L889.0 1153.5 L888.0 1153.4 L887.0 1153.8 L886.0 1153.7 L885.0 1152.6 L884.0 1153.5 L883.0 1153.6 L882.0 1152.8 L881.0 1154.1 L880.0 1153.1 L879.0 1153.2 L878.0 1153.9 L877.0 1153.7 L876.0 1153.6 L875.0 1153.0 L874.0 1152.7 L873.0 1152.8 L872.0 1152.4 L871.0 1152.5 L870.0 1152.2 L869.0 1152.2 L868.0 1152.6 L867.0 1152.3 L866.0 1152.5 L865.0 1152.2 L864.0 1152.7 L863.0 1152.4 L862.0 1152.7 L861.0 1152.7 L860.0 1152.6 L859.0 1152.2 L858.0 1152.5 L857.0 1152.6 L856.0 1153.4 L855.0 1152.6 L854.0 1153.1 L853.0 1153.8 L852.0 1153.9 L851.0 1153.0 L850.0 1153.3 L849.0 1152.9 L848.0 1153.4 L847.0 1153.1 L846.0 1153.1 L845.0 1153.1 L844.0 1153.8 L843.0 1154.1 L842.0 1154.1 L841.0 1152.9 L840.0 1153.0 L839.0 1153.2 L838.0 1154.0 L837.0 1152.9 L836.0 1153.0 L835.0 1152.9 L834.0 1153.4 L833.0 1153.5 L832.0 1153.9 L831.0 1154.0 L830.0 1154.3 L829.0 1153.4 L828.0 1154.6 L827.0 1154.1 L826.0 1153.8 L825.0 1153.6 L824.0 1154.4 L823.0 1153.8 L822.0 1153.7 L821.0 1154.4 L820.0 1153.1 L819.0 1154.7 L818.0 1153.8 L817.0 1153.3 L816.0 1154.0 L815.0 1154.4 L814.0 1153.0 L813.0 1153.5 L812.0 1153.0 L811.0 1153.7 L810.0 1153.4 L809.0 1154.0 L808.0 1153.6 L807.0 1154.5 L806.0 1153.7 L805.0 1153.7 L804.0 1153.5 L803.0 1153.2 L802.0 1153.4 L801.0 1153.3 L800.0 1153.6 L799.0 1154.2 L798.0 1153.4 L797.0 1153.7 L796.0 1155.1 L795.0 1154.3 L794.0 1153.9 L793.0 1154.1 L792.0 1155.0 L791.0 1153.3 L790.0 1155.1 L789.0 1153.4 L788.0 1155.0 L787.0 1154.6 L786.0 1155.3 L785.0 1153.4 L784.0 1154.2 L783.0 1154.8 L782.0 1153.4 L781.0 1153.5 L780.0 1154.9 L779.0 1154.6 L778.0 1155.4 L777.0 1153.7 L776.0 1154.0 L775.0 1155.3 L774.0 1155.5 L773.0 1154.4 L772.0 1153.7 L771.0 1154.1 L770.0 1155.3 L769.0 1153.5 L768.0 1154.1 L767.0 1153.7 L766.0 1155.8 L765.0 1155.4 L764.0 1155.9 L763.0 1153.7 L762.0 1154.8 L761.0 1155.1 L760.0 1154.4 L759.0 1153.6 L758.0 1154.7 L757.0 1155.0 L756.0 1153.6 L755.0 1155.4 L754.0 1154.4 L753.0 1154.1 L752.0 1154.5 L751.0 1155.0 L750.0 1154.8 L749.0 1154.1 L748.0 1155.9 L747.0 1156.3 L746.0 1155.0 L745.0 1154.8 L744.0 1156.3 L743.0 1154.3 L742.0 1156.4 L741.0 1156.1 L740.0 1154.1 L739.0 1155.6 L738.0 1155.7 L737.0 1154.2 L736.0 1156.3 L735.0 1156.0 L734.0 1155.7 L733.0 1154.0 L732.0 1154.5 L731.0 1154.0 L730.0 1155.1 L729.0 1154.2 L728.0 1154.3 L727.0 1156.3 L726.0 1156.6 L725.0 1155.5 L724.0 1154.7 L723.0 1156.7 L722.0 1156.5 L721.0 1156.0 L720.0 1156.7 L719.0 1155.4 L718.0 1155.5 L717.0 1155.3 L716.0 1156.0 L715.0 1155.5 L714.0 1155.5 L713.0 1155.9 L712.0 1155.4 L711.0 1156.8 L710.0 1156.4 L709.0 1155.8 L708.0 1155.6 L707.0 1156.4 L706.0 1154.9 L705.0 1154.8 L704.0 1155.8 L703.0 1154.4 L702.0 1156.6 L701.0 1155.9 L700.0 1155.8 L699.0 1155.2 L698.0 1155.9 L697.0 1156.4 L696.0 1155.6 L695.0 1154.7 L694.0 1156.7 L693.0 1154.2 L692.0 1154.7 L691.0 1155.6 L690.0 1154.2 L689.0 1155.8 L688.0 1155.9 L687.0 1155.8 L686.0 1157.1 L685.0 1155.5 L684.0 1157.1 L683.0 1156.1 L682.0 1155.7 L681.0 1155.3 L680.0 1157.2 L679.0 1154.6 L678.0 1155.6 L677.0 1155.1 L676.0 1156.1 L675.0 1155.0 L674.0 1155.2 L673.0 1155.1 L672.0 1154.9 L671.0 1157.0 L670.0 1157.1 L669.0 1155.7 L668.0 1157.3 L667.0 1156.0 L666.0 1156.4 L665.0 1157.5 L664.0 1154.3 L663.0 1154.7 L662.0 1156.1 L661.0 1155.4 L660.0 1156.5 L659.0 1157.6 L658.0 1157.1 L657.0 1154.8 L656.0 1157.0 L655.0 1157.3 L654.0 1154.8 L653.0 1154.7 L652.0 1154.9 L651.0 1156.8 L650.0 1157.5 L649.0 1155.7 L648.0 1155.7 L647.0 1157.6 L646.0 1157.1 L645.0 1155.5 L644.0 1157.0 L643.0 1155.0 L642.0 1156.0 L641.0 1156.9 L640.0 1157.0 L639.0 1157.5 L638.0 1156.6 L637.0 1154.7 L636.0 1157.1 L635.0 1156.6 L634.0 1156.0 L633.0 1157.3 L632.0 1157.5 L631.0 1156.6 L630.0 1155.1 L629.0 1155.1 L628.0 1155.2 L627.0 1155.2 L626.0 1155.7 L625.0 1157.8 L624.0 1157.9 L623.0 1157.7 L622.0 1156.0 L621.0 1157.8 L620.0 1156.9 L619.0 1155.5 L618.0 1155.6 L617.0 1154.8 L616.0 1154.9 L615.0 1156.3 L614.0 1157.0 L613.0 1156.0 L612.0 1158.2 L611.0 1158.7 L610.0 1158.8 L609.0 1159.1 L608.0 1159.9 L607.0 1159.3 L606.0 1156.6 L605.0 1157.3 L604.0 1159.6 L603.0 1158.5 L602.0 1159.8 L601.0 1156.9 L600.0 1158.0 L599.0 1157.4 L598.0 1159.7 L597.0 1160.6 L596.0 1161.2 L595.0 1158.8 L594.0 1156.2 L593.0 1158.9 L592.0 1156.8 L591.0 1158.8 L590.0 1161.1 L589.0 1156.2 L588.0 1156.9 L587.0 1160.4 L586.0 1157.5 L585.0 1157.9 L584.0 1156.6 L583.0 1156.5 L582.0 1158.6 L581.0 1158.5 L580.0 1161.3 L579.0 1160.5 L578.0 1156.7 L577.0 1158.0 L576.0 1157.9 L575.0 1157.4 L574.0 1156.9 L573.0 1159.3 L572.0 1160.7 L571.0 1156.2 L570.0 1158.0 L569.0 1156.6 L568.0 1156.9 L567.0 1156.1 L566.0 1156.4 L565.0 1157.9 L564.0 1156.9 L563.0 1157.2 L562.0 1156.4 L561.0 1156.4 L560.0 1159.4 L559.0 1156.6 L558.0 1158.2 L557.0 1158.1 L556.0 1160.3 L555.0 1160.7 L554.0 1160.2 L553.0 1160.8 L552.0 1156.4 L551.0 1159.6 L550.0 1159.3 L549.0 1158.8 L548.0 1159.7 L547.0 1161.1 L546.0 1159.0 L545.0 1158.0 L544.0 1158.3 L543.0 1156.1 L542.0 1157.5 L541.0 1159.2 L540.0 1158.6 L539.0 1157.3 L538.0 1157.3 L537.0 1157.0 L536.0 1156.8 L535.0 1161.0 L534.0 1160.6 L533.0 1157.8 L532.0 1158.1 L531.0 1157.4 L530.0 1160.4 L529.0 1160.1 L528.0 1160.4 L527.0 1158.7 L526.0 1158.2 L525.0 1156.3 L524.0 1160.2 L523.0 1157.8 L522.0 1157.1 L521.0 1156.5 L520.0 1159.6 L519.0 1156.1 L518.0 1156.4 L517.0 1156.6 L516.0 1158.0 L515.0 1155.9 L514.0 1159.0 L513.0 1157.6 L512.0 1157.1 L511.0 1159.7 L510.0 1160.5 L509.0 1158.8 L508.0 1159.0 L507.0 1155.9 L506.0 1158.8 L505.0 1157.9 L504.0 1160.1 L503.0 1159.6 L502.0 1157.7 L501.0 1158.3 L500.0 1158.3 L499.0 1158.8 L498.0 1157.0 L497.0 1159.6 L496.0 1158.2 L495.0 1159.0 L494.0 1158.6 L493.0 1155.6 L492.0 1157.7 L491.0 1156.1 L490.0 1158.9 L489.0 1157.3 L488.0 1155.9 L487.0 1159.8 L486.0 1156.7 L485.0 1158.6 L484.0 1159.3 L483.0 1157.7 L482.0 1157.9 L481.0 1156.4 L480.0 1158.4 L479.0 1158.8 L478.0 1156.6 L477.0 1157.2 L476.0 1157.8 L475.0 1156.6 L474.0 1157.1 L473.0 1158.1 L472.0 1156.1 L471.0 1155.4 L470.0 1155.4 L469.0 1157.5 L468.0 1156.7 L467.0 1157.8 L466.0 1157.6 L465.0 1155.9 L464.0 1157.3 L463.0 1154.7 L462.0 1154.1 L461.0 1154.2 L460.0 1154.6 L459.0 1156.1 L458.0 1153.9 L457.0 1156.4 L456.0 1154.8 L455.0 1155.3 L454.0 1156.3 L453.0 1155.4 L452.0 1154.3 L451.0 1154.0 L450.0 1155.9 L449.0 1154.8 L448.0 1153.9 L447.0 1153.9 L446.0 1154.8 L445.0 1153.2 L444.0 1154.1 L443.0 1153.2 L442.0 1153.7 L441.0 1154.0 L440.0 1153.1 L439.0 1154.0 L438.0 1153.1 L437.0 1152.7 L436.0 1152.1 L435.0 1152.1 L434.0 1152.1 L433.0 1152.1 L432.0 1152.1 L431.0 1152.1 L430.0 1152.1 L429.0 1152.1 L428.0 1152.1 L427.0 1152.1 L426.0 1152.1 L425.0 1152.1 L424.0 1152.1 L423.0 1152.1 L422.0 1152.1 L421.0 1152.1 L420.0 1152.1 L419.0 1152.1 L418.0 1152.1 L417.0 1152.1 L416.0 1152.1 L415.0 1152.1 L414.0 1152.1 L413.0 1152.1 L412.0 1152.1 L411.0 1152.1 L410.0 1152.1 L409.0 1152.1 L408.0 1152.1 L407.0 1152.1 L406.0 1152.1 L405.0 1152.1 L404.0 1152.1 L403.0 1152.1 L402.0 1152.1 L401.0 1152.1 L400.0 1152.1 L399.0 1152.1 L398.0 1152.1 L397.0 1152.1 L396.0 1152.1 L395.0 1152.1 L394.0 1152.1 L393.0 1152.1 L392.0 1152.1 L391.0 1152.1 L390.0 1152.1 L389.0 1152.1 L388.0 1152.1 L387.0 1152.1 L386.0 1152.1 L385.0 1152.1 L384.0 1152.1 L383.0 1152.1 L382.0 1152.1 L381.0 1152.1 L380.0 1152.1 L379.0 1152.1 L378.0 1152.1 L377.0 1152.1 L376.0 1152.1 Z" fill="#d8ebdd"/></svg>
<svg style="left:0;top:0" width="1536" height="1265"><path d="M1083.0 1150.0 L1084.0 1150.3 L1085.0 1150.0 L1086.0 1150.0 L1087.0 1149.7 L1088.0 1149.7 L1089.0 1149.7 L1090.0 1149.9 L1091.0 1149.7 L1092.0 1149.8 L1093.0 1149.8 L1094.0 1150.2 L1095.0 1150.4 L1096.0 1150.3 L1097.0 1150.1 L1098.0 1150.3 L1099.0 1149.7 L1100.0 1149.9 L1101.0 1149.9 L1102.0 1149.9 L1103.0 1149.8 L1104.0 1150.0 L1105.0 1150.4 L1106.0 1149.7 L1107.0 1149.8 L1108.0 1150.0 L1109.0 1149.9 L1110.0 1149.8 L1111.0 1150.3 L1112.0 1149.8 L1113.0 1150.2 L1114.0 1150.3 L1115.0 1150.2 L1116.0 1149.8 L1117.0 1150.2 L1118.0 1149.8 L1119.0 1149.6 L1120.0 1150.0 L1121.0 1150.1 L1122.0 1150.0 L1123.0 1149.8 L1124.0 1149.7 L1125.0 1149.9 L1126.0 1149.8 L1127.0 1150.3 L1128.0 1150.3 L1129.0 1150.2 L1130.0 1149.7 L1131.0 1150.1 L1132.0 1149.9 L1133.0 1150.4 L1134.0 1150.3 L1135.0 1150.2 L1136.0 1149.8 L1137.0 1149.8 L1138.0 1149.8 L1139.0 1150.1 L1140.0 1149.9 L1141.0 1150.0 L1142.0 1150.0 L1143.0 1150.3 L1144.0 1149.6 L1145.0 1150.2 L1146.0 1149.5 L1147.0 1149.5 L1148.0 1150.4 L1149.0 1150.0 L1150.0 1149.6 L1151.0 1149.5 L1152.0 1150.0 L1153.0 1150.1 L1154.0 1150.2 L1155.0 1149.5 L1156.0 1150.2 L1157.0 1149.9 L1158.0 1150.2 L1159.0 1149.9 L1160.0 1149.5 L1161.0 1150.3 L1162.0 1149.6 L1163.0 1149.9 L1164.0 1149.6 L1165.0 1149.7 L1166.0 1150.2 L1167.0 1149.6 L1168.0 1149.9 L1169.0 1150.3 L1170.0 1150.4 L1171.0 1149.9 L1172.0 1150.0 L1173.0 1150.1 L1174.0 1150.2 L1175.0 1150.0 L1176.0 1150.1 L1177.0 1149.6 L1178.0 1150.4 L1179.0 1149.7 L1180.0 1149.6 L1181.0 1150.2 L1182.0 1149.5 L1183.0 1146.0 L1184.0 1145.4 L1185.0 1147.4 L1186.0 1147.1 L1187.0 1147.0 L1188.0 1145.1 L1189.0 1146.4 L1190.0 1147.1 L1191.0 1146.9 L1192.0 1147.4 L1193.0 1148.1 L1194.0 1148.0 L1195.0 1145.6 L1196.0 1147.4 L1197.0 1145.3 L1198.0 1147.5 L1199.0 1147.4 L1200.0 1146.7 L1201.0 1147.7 L1202.0 1147.1 L1203.0 1145.3 L1204.0 1145.5 L1205.0 1145.7 L1206.0 1146.3 L1207.0 1145.4 L1208.0 1145.3 L1209.0 1146.5 L1210.0 1146.0 L1211.0 1148.1 L1212.0 1146.0 L1213.0 1146.9 L1214.0 1149.4 L1215.0 1149.5 L1216.0 1149.9 L1217.0 1150.2 L1218.0 1149.3 L1219.0 1150.1 L1220.0 1149.7 L1221.0 1149.9 L1222.0 1149.9 L1223.0 1149.4 L1224.0 1149.2 L1225.0 1150.0 L1226.0 1149.5 L1227.0 1149.9 L1228.0 1149.6 L1229.0 1149.8 L1230.0 1150.0 L1231.0 1150.1 L1232.0 1150.0 L1233.0 1149.3 L1234.0 1149.7 L1235.0 1150.0 L1236.0 1149.3 L1237.0 1149.2 L1238.0 1149.8 L1239.0 1150.1 L1240.0 1150.0 L1241.0 1150.1 L1242.0 1149.9 L1243.0 1150.1 L1244.0 1150.0 L1245.0 1150.0 L1246.0 1149.6 L1247.0 1149.3 L1248.0 1149.4 L1249.0 1149.8 L1250.0 1148.4 L1251.0 1148.1 L1252.0 1148.5 L1253.0 1148.5 L1254.0 1149.1 L1255.0 1148.7 L1256.0 1147.2 L1257.0 1149.0 L1258.0 1148.2 L1259.0 1147.9 L1260.0 1147.4 L1261.0 1148.8 L1262.0 1148.7 L1263.0 1147.5 L1264.0 1147.0 L1265.0 1146.8 L1266.0 1145.2 L1267.0 1145.5 L1268.0 1145.4 L1269.0 1148.1 L1270.0 1148.0 L1271.0 1145.8 L1272.0 1145.1 L1273.0 1146.5 L1274.0 1146.1 L1275.0 1148.1 L1276.0 1146.7 L1277.0 1144.9 L1278.0 1145.2 L1279.0 1145.0 L1280.0 1144.6 L1281.0 1147.1 L1282.0 1147.6 L1283.0 1147.4 L1284.0 1146.1 L1285.0 1145.5 L1286.0 1144.5 L1287.0 1145.3 L1288.0 1145.5 L1289.0 1145.0 L1290.0 1146.1 L1291.0 1145.8 L1292.0 1147.6 L1293.0 1144.8 L1294.0 1146.9 L1295.0 1144.3 L1296.0 1142.2 L1297.0 1146.5 L1298.0 1147.2 L1299.0 1146.7 L1300.0 1145.2 L1301.0 1144.9 L1302.0 1147.1 L1303.0 1140.2 L1304.0 1145.3 L1305.0 1145.0 L1306.0 1139.7 L1307.0 1146.3 L1308.0 1144.7 L1309.0 1140.2 L1310.0 1145.8 L1311.0 1145.0 L1312.0 1141.2 L1313.0 1144.1 L1314.0 1142.9 L1315.0 1144.7 L1316.0 1145.7 L1317.0 1145.6 L1318.0 1142.1 L1319.0 1143.3 L1320.0 1145.1 L1321.0 1146.6 L1322.0 1144.2 L1323.0 1143.4 L1324.0 1144.7 L1325.0 1145.5 L1326.0 1143.5 L1327.0 1142.3 L1328.0 1145.6 L1329.0 1146.6 L1330.0 1145.1 L1331.0 1144.8 L1332.0 1143.5 L1333.0 1145.9 L1334.0 1143.0 L1335.0 1143.3 L1336.0 1144.4 L1337.0 1145.9 L1338.0 1142.3 L1339.0 1145.4 L1340.0 1143.0 L1341.0 1145.8 L1342.0 1145.9 L1343.0 1143.4 L1344.0 1145.5 L1345.0 1142.5 L1346.0 1144.7 L1347.0 1146.1 L1348.0 1145.9 L1349.0 1145.1 L1350.0 1143.9 L1351.0 1143.6 L1352.0 1147.4 L1353.0 1146.6 L1354.0 1147.2 L1355.0 1144.6 L1356.0 1147.5 L1357.0 1147.8 L1358.0 1147.8 L1359.0 1146.6 L1360.0 1144.9 L1361.0 1144.9 L1362.0 1145.5 L1363.0 1144.5 L1364.0 1144.8 L1365.0 1146.9 L1366.0 1147.4 L1367.0 1144.8 L1368.0 1145.4 L1369.0 1147.9 L1370.0 1145.7 L1371.0 1146.7 L1372.0 1146.7 L1373.0 1146.9 L1374.0 1147.5 L1375.0 1148.0 L1376.0 1147.1 L1377.0 1146.8 L1378.0 1144.8 L1379.0 1147.6 L1380.0 1144.8 L1381.0 1147.4 L1382.0 1146.9 L1383.0 1145.3 L1384.0 1145.3 L1385.0 1146.6 L1386.0 1147.9 L1387.0 1146.5 L1388.0 1146.8 L1389.0 1145.0 L1390.0 1147.4 L1391.0 1146.9 L1392.0 1145.1 L1393.0 1148.0 L1394.0 1146.7 L1395.0 1145.4 L1396.0 1145.6 L1397.0 1148.0 L1398.0 1148.0 L1399.0 1147.9 L1400.0 1145.1 L1401.0 1147.3 L1402.0 1145.7 L1403.0 1145.2 L1404.0 1147.0 L1405.0 1147.3 L1406.0 1145.0 L1407.0 1146.1 L1408.0 1147.3 L1409.0 1145.8 L1410.0 1147.1 L1411.0 1147.3 L1412.0 1148.2 L1413.0 1145.7 L1414.0 1145.2 L1415.0 1146.1 L1416.0 1145.1 L1417.0 1148.1 L1418.0 1147.4 L1419.0 1146.7 L1420.0 1145.1 L1421.0 1145.1 L1422.0 1147.0 L1423.0 1147.4 L1424.0 1146.8 L1425.0 1146.6 L1426.0 1145.2 L1427.0 1147.6 L1428.0 1145.7 L1429.0 1145.9 L1430.0 1145.6 L1431.0 1145.8 L1432.0 1146.3 L1433.0 1147.2 L1434.0 1147.2 L1435.0 1147.1 L1436.0 1145.8 L1437.0 1148.0 L1438.0 1147.6 L1439.0 1145.9 L1440.0 1147.5 L1441.0 1148.1 L1442.0 1148.2 L1443.0 1146.6 L1444.0 1147.3 L1445.0 1145.2 L1446.0 1145.5 L1447.0 1145.2 L1448.0 1147.5 L1449.0 1148.0 L1450.0 1148.0 L1451.0 1146.8 L1452.0 1146.1 L1453.0 1146.9 L1454.0 1147.6 L1455.0 1147.0 L1456.0 1146.4 L1457.0 1146.3 L1458.0 1146.0 L1459.0 1145.7 L1460.0 1146.3 L1461.0 1148.0 L1462.0 1145.8 L1463.0 1147.5 L1464.0 1146.6 L1465.0 1147.2 L1466.0 1146.1 L1467.0 1147.8 L1468.0 1147.6 L1469.0 1147.6 L1470.0 1147.9 L1471.0 1145.7 L1472.0 1146.6 L1473.0 1147.4 L1474.0 1147.2 L1475.0 1145.4 L1476.0 1146.9 L1477.0 1147.7 L1478.0 1146.0 L1479.0 1146.4 L1480.0 1145.4 L1481.0 1148.1 L1482.0 1147.0 L1483.0 1146.0 L1484.0 1145.9 L1485.0 1145.7 L1486.0 1148.3 L1487.0 1147.6 L1488.0 1148.1 L1489.0 1147.9 L1490.0 1145.6 L1491.0 1146.7 L1492.0 1145.7 L1493.0 1147.4 L1494.0 1145.9 L1495.0 1147.1 L1496.0 1147.7 L1497.0 1146.2 L1498.0 1145.7 L1499.0 1148.2 L1500.0 1146.7 L1501.0 1146.7 L1502.0 1147.8 L1503.0 1147.4 L1504.0 1148.1 L1505.0 1147.9 L1506.0 1147.8 L1507.0 1146.8 L1508.0 1146.6 L1509.0 1147.9 L1510.0 1148.5 L1511.0 1147.6 L1512.0 1146.6 L1513.0 1148.0 L1514.0 1147.6 L1515.0 1147.9 L1516.0 1146.2 L1517.0 1147.0 L1518.0 1148.4 L1519.0 1148.3 L1520.0 1147.4 L1521.0 1147.0 L1522.0 1146.7 L1523.0 1148.3 L1524.0 1148.1 L1525.0 1146.6 L1526.0 1147.4 L1527.0 1147.8 L1528.0 1147.7 L1529.0 1145.9 L1530.0 1147.7 L1531.0 1147.0 L1532.0 1147.6 L1533.0 1147.4 L1534.0 1146.2 L1535.0 1145.8 L1536.0 1147.6 L1536.0 1154.8 L1535.0 1156.6 L1534.0 1156.2 L1533.0 1155.0 L1532.0 1154.8 L1531.0 1155.4 L1530.0 1154.7 L1529.0 1156.5 L1528.0 1154.7 L1527.0 1154.6 L1526.0 1155.0 L1525.0 1155.8 L1524.0 1154.3 L1523.0 1154.1 L1522.0 1155.7 L1521.0 1155.4 L1520.0 1155.0 L1519.0 1154.1 L1518.0 1154.0 L1517.0 1155.4 L1516.0 1156.2 L1515.0 1154.5 L1514.0 1154.8 L1513.0 1154.4 L1512.0 1155.8 L1511.0 1154.8 L1510.0 1153.9 L1509.0 1154.5 L1508.0 1155.8 L1507.0 1155.6 L1506.0 1154.6 L1505.0 1154.5 L1504.0 1154.3 L1503.0 1155.0 L1502.0 1154.6 L1501.0 1155.7 L1500.0 1155.7 L1499.0 1154.2 L1498.0 1156.7 L1497.0 1156.2 L1496.0 1154.7 L1495.0 1155.3 L1494.0 1156.5 L1493.0 1155.0 L1492.0 1156.7 L1491.0 1155.7 L1490.0 1156.8 L1489.0 1154.5 L1488.0 1154.3 L1487.0 1154.8 L1486.0 1154.1 L1485.0 1156.7 L1484.0 1156.5 L1483.0 1156.4 L1482.0 1155.4 L1481.0 1154.3 L1480.0 1157.0 L1479.0 1156.0 L1478.0 1156.4 L1477.0 1154.7 L1476.0 1155.5 L1475.0 1157.0 L1474.0 1155.2 L1473.0 1155.0 L1472.0 1155.8 L1471.0 1156.7 L1470.0 1154.5 L1469.0 1154.8 L1468.0 1154.8 L1467.0 1154.6 L1466.0 1156.3 L1465.0 1155.2 L1464.0 1155.8 L1463.0 1154.9 L1462.0 1156.6 L1461.0 1154.4 L1460.0 1156.1 L1459.0 1156.7 L1458.0 1156.4 L1457.0 1156.1 L1456.0 1156.0 L1455.0 1155.4 L1454.0 1154.8 L1453.0 1155.5 L1452.0 1156.3 L1451.0 1155.6 L1450.0 1154.4 L1449.0 1154.4 L1448.0 1154.9 L1447.0 1157.2 L1446.0 1156.9 L1445.0 1157.2 L1444.0 1155.1 L1443.0 1155.8 L1442.0 1154.2 L1441.0 1154.3 L1440.0 1154.9 L1439.0 1156.5 L1438.0 1154.8 L1437.0 1154.4 L1436.0 1156.6 L1435.0 1155.3 L1434.0 1155.2 L1433.0 1155.2 L1432.0 1156.1 L1431.0 1156.6 L1430.0 1156.8 L1429.0 1156.5 L1428.0 1156.7 L1427.0 1154.8 L1426.0 1157.2 L1425.0 1155.8 L1424.0 1155.6 L1423.0 1155.0 L1422.0 1155.4 L1421.0 1157.3 L1420.0 1157.3 L1419.0 1155.7 L1418.0 1155.0 L1417.0 1154.3 L1416.0 1157.3 L1415.0 1156.3 L1414.0 1157.2 L1413.0 1156.7 L1412.0 1154.2 L1411.0 1155.1 L1410.0 1155.3 L1409.0 1156.6 L1408.0 1155.1 L1407.0 1156.3 L1406.0 1157.4 L1405.0 1155.1 L1404.0 1155.4 L1403.0 1157.2 L1402.0 1156.7 L1401.0 1155.1 L1400.0 1157.3 L1399.0 1154.5 L1398.0 1154.4 L1397.0 1154.4 L1396.0 1156.8 L1395.0 1157.0 L1394.0 1155.7 L1393.0 1154.4 L1392.0 1157.3 L1391.0 1155.5 L1390.0 1155.0 L1389.0 1157.4 L1388.0 1155.6 L1387.0 1155.9 L1386.0 1154.5 L1385.0 1155.8 L1384.0 1157.1 L1383.0 1157.1 L1382.0 1155.5 L1381.0 1155.0 L1380.0 1157.6 L1379.0 1154.8 L1378.0 1157.6 L1377.0 1155.6 L1376.0 1155.3 L1375.0 1154.4 L1374.0 1154.9 L1373.0 1155.5 L1372.0 1155.7 L1371.0 1155.7 L1370.0 1156.7 L1369.0 1154.5 L1368.0 1157.0 L1367.0 1157.6 L1366.0 1155.0 L1365.0 1155.5 L1364.0 1157.6 L1363.0 1157.9 L1362.0 1156.9 L1361.0 1157.5 L1360.0 1157.5 L1359.0 1155.8 L1358.0 1154.6 L1357.0 1154.6 L1356.0 1154.9 L1355.0 1157.8 L1354.0 1155.2 L1353.0 1155.8 L1352.0 1155.0 L1351.0 1158.8 L1350.0 1158.5 L1349.0 1157.3 L1348.0 1156.5 L1347.0 1156.3 L1346.0 1157.7 L1345.0 1159.9 L1344.0 1156.9 L1343.0 1159.0 L1342.0 1156.5 L1341.0 1156.6 L1340.0 1159.4 L1339.0 1157.0 L1338.0 1160.1 L1337.0 1156.5 L1336.0 1158.0 L1335.0 1159.1 L1334.0 1159.4 L1333.0 1156.5 L1332.0 1158.9 L1331.0 1157.6 L1330.0 1157.3 L1329.0 1155.8 L1328.0 1156.8 L1327.0 1160.1 L1326.0 1158.9 L1325.0 1156.9 L1324.0 1157.7 L1323.0 1159.0 L1322.0 1158.2 L1321.0 1155.8 L1320.0 1157.3 L1319.0 1159.1 L1318.0 1160.3 L1317.0 1156.8 L1316.0 1156.7 L1315.0 1157.7 L1314.0 1159.5 L1313.0 1158.3 L1312.0 1161.2 L1311.0 1157.4 L1310.0 1156.6 L1309.0 1162.2 L1308.0 1157.7 L1307.0 1156.1 L1306.0 1162.7 L1305.0 1157.4 L1304.0 1157.1 L1303.0 1162.2 L1302.0 1155.3 L1301.0 1157.5 L1300.0 1157.2 L1299.0 1155.7 L1298.0 1155.2 L1297.0 1155.9 L1296.0 1160.2 L1295.0 1158.1 L1294.0 1155.5 L1293.0 1157.6 L1292.0 1154.8 L1291.0 1156.6 L1290.0 1156.3 L1289.0 1157.4 L1288.0 1156.9 L1287.0 1157.1 L1286.0 1157.9 L1285.0 1156.9 L1284.0 1156.3 L1283.0 1155.0 L1282.0 1154.8 L1281.0 1155.3 L1280.0 1157.8 L1279.0 1157.4 L1278.0 1157.2 L1277.0 1157.5 L1276.0 1155.7 L1275.0 1154.3 L1274.0 1156.3 L1273.0 1155.9 L1272.0 1157.3 L1271.0 1156.6 L1270.0 1154.4 L1269.0 1154.3 L1268.0 1157.0 L1267.0 1156.9 L1266.0 1157.2 L1265.0 1155.6 L1264.0 1155.4 L1263.0 1154.9 L1262.0 1153.7 L1261.0 1153.6 L1260.0 1155.0 L1259.0 1154.5 L1258.0 1154.2 L1257.0 1153.4 L1256.0 1155.2 L1255.0 1153.7 L1254.0 1153.3 L1253.0 1153.9 L1252.0 1153.9 L1251.0 1154.3 L1250.0 1154.0 L1249.0 1152.6 L1248.0 1153.0 L1247.0 1153.1 L1246.0 1152.8 L1245.0 1152.4 L1244.0 1152.4 L1243.0 1152.3 L1242.0 1152.5 L1241.0 1152.3 L1240.0 1152.4 L1239.0 1152.3 L1238.0 1152.6 L1237.0 1153.2 L1236.0 1153.1 L1235.0 1152.4 L1234.0 1152.7 L1233.0 1153.1 L1232.0 1152.4 L1231.0 1152.3 L1230.0 1152.4 L1229.0 1152.6 L1228.0 1152.8 L1227.0 1152.5 L1226.0 1152.9 L1225.0 1152.4 L1224.0 1153.2 L1223.0 1153.0 L1222.0 1152.5 L1221.0 1152.5 L1220.0 1152.7 L1219.0 1152.3 L1218.0 1153.1 L1217.0 1152.2 L1216.0 1152.5 L1215.0 1152.9 L1214.0 1153.0 L1213.0 1155.5 L1212.0 1156.4 L1211.0 1154.3 L1210.0 1156.4 L1209.0 1155.9 L1208.0 1157.1 L1207.0 1157.0 L1206.0 1156.1 L1205.0 1156.7 L1204.0 1156.9 L1203.0 1157.1 L1202.0 1155.3 L1201.0 1154.7 L1200.0 1155.7 L1199.0 1155.0 L1198.0 1154.9 L1197.0 1157.1 L1196.0 1155.0 L1195.0 1156.8 L1194.0 1154.4 L1193.0 1154.3 L1192.0 1155.0 L1191.0 1155.5 L1190.0 1155.3 L1189.0 1156.0 L1188.0 1157.3 L1187.0 1155.4 L1186.0 1155.3 L1185.0 1155.0 L1184.0 1157.0 L1183.0 1156.4 L1182.0 1152.9 L1181.0 1152.2 L1180.0 1152.8 L1179.0 1152.7 L1178.0 1152.0 L1177.0 1152.8 L1176.0 1152.3 L1175.0 1152.4 L1174.0 1152.2 L1173.0 1152.3 L1172.0 1152.4 L1171.0 1152.5 L1170.0 1152.0 L1169.0 1152.1 L1168.0 1152.5 L1167.0 1152.8 L1166.0 1152.2 L1165.0 1152.7 L1164.0 1152.8 L1163.0 1152.5 L1162.0 1152.8 L1161.0 1152.1 L1160.0 1152.9 L1159.0 1152.5 L1158.0 1152.2 L1157.0 1152.5 L1156.0 1152.2 L1155.0 1152.9 L1154.0 1152.2 L1153.0 1152.3 L1152.0 1152.4 L1151.0 1152.9 L1150.0 1152.8 L1149.0 1152.4 L1148.0 1152.0 L1147.0 1152.9 L1146.0 1152.9 L1145.0 1152.2 L1144.0 1152.8 L1143.0 1152.1 L1142.0 1152.4 L1141.0 1152.4 L1140.0 1152.5 L1139.0 1152.3 L1138.0 1152.6 L1137.0 1152.6 L1136.0 1152.6 L1135.0 1152.2 L1134.0 1152.1 L1133.0 1152.0 L1132.0 1152.5 L1131.0 1152.3 L1130.0 1152.7 L1129.0 1152.2 L1128.0 1152.1 L1127.0 1152.1 L1126.0 1152.6 L1125.0 1152.5 L1124.0 1152.7 L1123.0 1152.6 L1122.0 1152.4 L1121.0 1152.3 L1120.0 1152.4 L1119.0 1152.8 L1118.0 1152.6 L1117.0 1152.2 L1116.0 1152.6 L1115.0 1152.2 L1114.0 1152.1 L1113.0 1152.2 L1112.0 1152.6 L1111.0 1152.1 L1110.0 1152.6 L1109.0 1152.5 L1108.0 1152.4 L1107.0 1152.6 L1106.0 1152.7 L1105.0 1152.0 L1104.0 1152.4 L1103.0 1152.6 L1102.0 1152.5 L1101.0 1152.5 L1100.0 1152.5 L1099.0 1152.7 L1098.0 1152.1 L1097.0 1152.3 L1096.0 1152.1 L1095.0 1152.0 L1094.0 1152.2 L1093.0 1152.6 L1092.0 1152.6 L1091.0 1152.7 L1090.0 1152.5 L1089.0 1152.7 L1088.0 1152.7 L1087.0 1152.7 L1086.0 1152.4 L1085.0 1152.4 L1084.0 1152.1 L1083.0 1152.4 Z" fill="#d8ebdd"/></svg>
<div class="a" style="left:375px;top:1150.5px;width:705px;height:1.3px;background:#b8ccbf;"></div>
<div class="a" style="left:1082px;top:1150.5px;width:454px;height:1.3px;background:#b8ccbf;"></div>
<div class="a" style="left:268px;top:256px;width:293px;height:380px;background:#2a2a2f;border:1.5px solid #0f0f11;box-shadow:0 2px 6px rgba(0,0,0,0.35)"></div>
<div class="t" style="left:311px;top:272px;font-size:20px;color:#b4b4b4;letter-spacing:0.25px">トラックを追加</div>
<div class="t" style="left:311px;top:307px;font-size:20px;color:#b4b4b4;letter-spacing:0.25px">トラックを追加...</div>
<div class="t" style="left:314px;top:342px;font-size:20px;color:#b4b4b4;letter-spacing:0.25px">字幕トラックを追加</div>
<div class="t" style="left:311px;top:389px;font-size:20px;color:#56565b;letter-spacing:0.25px">トラックを上に移動</div>
<div class="t" style="left:311px;top:424px;font-size:20px;color:#56565b;letter-spacing:0.25px">トラックを下に移動</div>
<div class="t" style="left:311px;top:471px;font-size:20px;color:#b4b4b4;letter-spacing:0.25px">トラックを削除</div>
<div class="t" style="left:314px;top:506px;font-size:20px;color:#b4b4b4;letter-spacing:0.25px">空のトラックを削除</div>
<div class="t" style="left:311px;top:553px;font-size:20px;color:#b4b4b4;letter-spacing:0.25px">トラックカラーを変更</div>
<div class="a" style="left:270px;top:374.5px;width:289px;height:2px;background:#3b3b40;"></div>
<div class="a" style="left:270px;top:456.5px;width:289px;height:2px;background:#3b3b40;"></div>
<div class="a" style="left:270px;top:539.5px;width:289px;height:2px;background:#3b3b40;"></div>
<div class="a" style="left:270px;top:586.5px;width:289px;height:2px;background:#3b3b40;"></div>
<div class="a" style="left:270px;top:593px;width:289px;height:35px;background:#1c1c1f;"></div>
<div class="t" style="left:314px;top:601px;font-size:20px;color:#f4f4f4;letter-spacing:0.4px">字幕の書き出し...</div>
<svg style="left:531px;top:554px" width="14" height="20" viewBox="0 0 14 20"><path d="M2 2 L11 10 L2 18" fill="none" stroke="#9a9a9a" stroke-width="2.2"/></svg>
<svg style="left:0px;top:48px" width="46" height="32" viewBox="0 0 46 32"><rect x="0" y="2.7" width="44" height="17.3" fill="#8e8e8e"/><rect x="2" y="5" width="12" height="8.3" fill="#2c2c30"/><rect x="16" y="5" width="12" height="8.3" fill="#2c2c30"/><rect x="30" y="5" width="12" height="8.3" fill="#2c2c30"/><rect x="2" y="15.5" width="12" height="1.8" fill="#222"/><rect x="0" y="22" width="44" height="7" fill="#7e7e7e"/><rect x="2" y="24.5" width="12" height="1.8" fill="#222"/></svg>
<svg style="left:534px;top:48px" width="22" height="33" viewBox="0 0 22 33"><path d="M1 1 L1 25 L6.5 20 L11.5 31 L16 29 L11 18.5 L19.5 18 Z" fill="#e74b3c" stroke="#e74b3c" stroke-width="1" stroke-linejoin="round"/></svg>
<svg style="left:588px;top:46px" width="52" height="36" viewBox="0 0 52 36"><g fill="none" stroke="#8a8a8a" stroke-width="2"><path d="M17 8 H2 V28 H17"/><path d="M33 8 H49 V28 H33"/><rect x="20" y="2" width="12" height="32" rx="3"/><path d="M26 8 V28"/><path d="M11 12 L6 18 L11 24"/><path d="M39 12 L44 18 L39 24"/></g></svg>
<svg style="left:661px;top:44px" width="50" height="37" viewBox="0 0 50 37"><g fill="none" stroke="#8a8a8a" stroke-width="2"><path d="M10 12 L3 20 L10 28"/><path d="M40 12 L47 20 L40 28"/><path d="M19 9 Q14 9 14 14 V28 Q14 33 19 33"/><path d="M31 9 Q36 9 36 14 V28 Q36 33 31 33"/><path d="M25 4 V35"/></g><path d="M20 1 H30 L25 7 Z" fill="#8a8a8a"/></svg>
<svg style="left:734px;top:51px" width="40" height="28" viewBox="0 0 40 28"><rect x="2.8" y="1.5" width="34.7" height="3" fill="#8a8a8a"/><rect x="2.8" y="22.6" width="34.7" height="3" fill="#8a8a8a"/><rect x="1" y="7" width="38" height="13.4" fill="#8a8a8a"/><path d="M3 13.5 H37" stroke="#1a1a1e" stroke-width="2"/><ellipse cx="4.5" cy="13.5" rx="1.9" ry="5.2" fill="#1a1a1e"/><ellipse cx="10" cy="13.5" rx="1.9" ry="5.2" fill="#1a1a1e"/><ellipse cx="20" cy="13.5" rx="1.9" ry="5.2" fill="#1a1a1e"/><ellipse cx="30" cy="13.5" rx="1.9" ry="5.2" fill="#1a1a1e"/><ellipse cx="35.6" cy="13.5" rx="1.9" ry="5.2" fill="#1a1a1e"/></svg>
<div class="a" style="left:797.5px;top:39px;width:2px;height:52px;background:#3a3a3f;"></div>
<div class="a" style="left:1028px;top:39px;width:2px;height:52px;background:#3a3a3f;"></div>
<div class="a" style="left:1256.5px;top:39px;width:2px;height:52px;background:#3a3a3f;"></div>
<div class="a" style="left:1430px;top:39px;width:2px;height:52px;background:#3a3a3f;"></div>
<svg style="left:818px;top:47px" width="52" height="36" viewBox="0 0 52 36"><g fill="none" stroke="#8a8a8a" stroke-width="2"><rect x="14" y="3" width="22" height="19" fill="#2c2c31"/><rect x="2" y="12" width="8" height="18"/><rect x="40" y="12" width="8" height="18"/><path d="M19 27 L25 33 L31 27"/></g></svg>
<svg style="left:892px;top:43px" width="42" height="40" viewBox="0 0 42 40"><g fill="none" stroke="#8a8a8a" stroke-width="2"><rect x="3" y="7" width="22" height="19" fill="#2c2c31"/><path d="M28 17 H37 V35 H15 V29"/><path d="M30 2 Q37 2 37 9 V13"/><path d="M33 9.5 L37 13.5 L41 9.5"/></g></svg>
<svg style="left:957px;top:44px" width="52" height="40" viewBox="0 0 52 40"><g fill="none" stroke="#8a8a8a" stroke-width="2"><rect x="3" y="10" width="22" height="19" fill="#2c2c31"/><path d="M27 10 H49 V29 H28"/><path d="M14 35 V20 M9 25 L14 19.5 L19 25"/><path d="M14 35 Q14 39 20 39 Q27 39 27 33 V28"/><path d="M38 4 V22 M33 17 L38 22.5 L43 17"/><path d="M38 4 Q38 0 32 0 Q27 0 27 6 V10"/></g></svg>
<svg style="left:1056px;top:45px" width="38" height="36" viewBox="0 0 38 36"><g fill="none" stroke="#f6f6f6" stroke-width="4.6"><path d="M15.17 9.47 L9.07 15.57 A9.1 9.1 0 0 0 21.93 28.43 L28.03 22.33"/><path d="M16.02 8.62 L19.4 5.2 M28.88 21.48 L32.3 18.1"/></g></svg>
<svg style="left:1126px;top:47px" width="33" height="34" viewBox="0 0 33 34"><g fill="none" stroke="#f6f6f6" stroke-width="3.6" stroke-linecap="round" transform="translate(1.5 2.5) scale(1.25)"><path d="M10 13a5 5 0 0 0 7.54.54l3-3a5 5 0 0 0-7.07-7.07l-1.72 1.71"/><path d="M14 11a5 5 0 0 0-7.54-.54l-3 3a5 5 0 0 0 7.07 7.07l1.71-1.71"/></g></svg>
<svg style="left:1198px;top:48px" width="28" height="32" viewBox="0 0 28 32"><path d="M6.5 13 V5 Q6.5 2.3 9.2 2.3 H18 Q20.7 2.3 20.7 5 V13" fill="none" stroke="#8e8e8e" stroke-width="2.6"/><rect x="0.5" y="12" width="25.8" height="18.7" rx="2.5" fill="#8e8e8e"/><path d="M5.5 21 H21.5 M9.5 16.5 L5 21 L9.5 25.5 M17.5 16.5 L22 21 L17.5 25.5" fill="none" stroke="#222226" stroke-width="2.4"/></svg>
<svg style="left:1279px;top:51px" width="22" height="24" viewBox="0 0 22 24"><path d="M1.5 1.5 H19 V22 L10.25 16 L1.5 22 Z" fill="#0a80e8" stroke="#0c0c0e" stroke-width="1.5"/></svg>
<svg style="left:1315px;top:57px" width="20" height="14" viewBox="0 0 20 14"><path d="M2 2 L10 10 L18 2" fill="none" stroke="#8c8c8c" stroke-width="2.2"/></svg>
<svg style="left:1355px;top:51px" width="22" height="24" viewBox="0 0 22 24"><path d="M1.5 4 Q1.5 1.5 4 1.5 H17 Q19.5 1.5 19.5 4 V16 L10.5 22.5 L1.5 16 Z" fill="#0a80e8" stroke="#0c0c0e" stroke-width="1.5"/></svg>
<svg style="left:1392px;top:57px" width="20" height="14" viewBox="0 0 20 14"><path d="M2 2 L10 10 L18 2" fill="none" stroke="#8c8c8c" stroke-width="2.2"/></svg>
<svg style="left:1450px;top:48px" width="52" height="34" viewBox="0 0 52 34"><rect x="1.5" y="1.5" width="41" height="21" fill="#2a2a2e" stroke="#7e7e7e" stroke-width="2"/><path d="M5.0 4 V11" stroke="#5e5e62" stroke-width="1"/><path d="M9.2 4 V8" stroke="#5e5e62" stroke-width="1"/><path d="M13.4 4 V11" stroke="#5e5e62" stroke-width="1"/><path d="M17.6 4 V8" stroke="#5e5e62" stroke-width="1"/><path d="M21.8 4 V11" stroke="#5e5e62" stroke-width="1"/><path d="M26.0 4 V8" stroke="#5e5e62" stroke-width="1"/><path d="M30.2 4 V11" stroke="#5e5e62" stroke-width="1"/><path d="M34.4 4 V8" stroke="#5e5e62" stroke-width="1"/><path d="M38.6 4 V11" stroke="#5e5e62" stroke-width="1"/><circle cx="35.5" cy="19.5" r="7.5" fill="#3a3a3e" stroke="#8a8a8a" stroke-width="2.6"/><path d="M41 25 L47 31" stroke="#8a8a8a" stroke-width="3.2" stroke-linecap="round"/></svg>
<svg style="left:1520px;top:48px" width="20" height="30" viewBox="0 0 20 30"><path d="M1 1.5 H20 M1 18 H20" stroke="#4a4a4e" stroke-width="2"/><path d="M3 3 V11 M9 3 V8 M15 3 V11" stroke="#4a4a4e" stroke-width="1.2"/></svg>
</body></html>
